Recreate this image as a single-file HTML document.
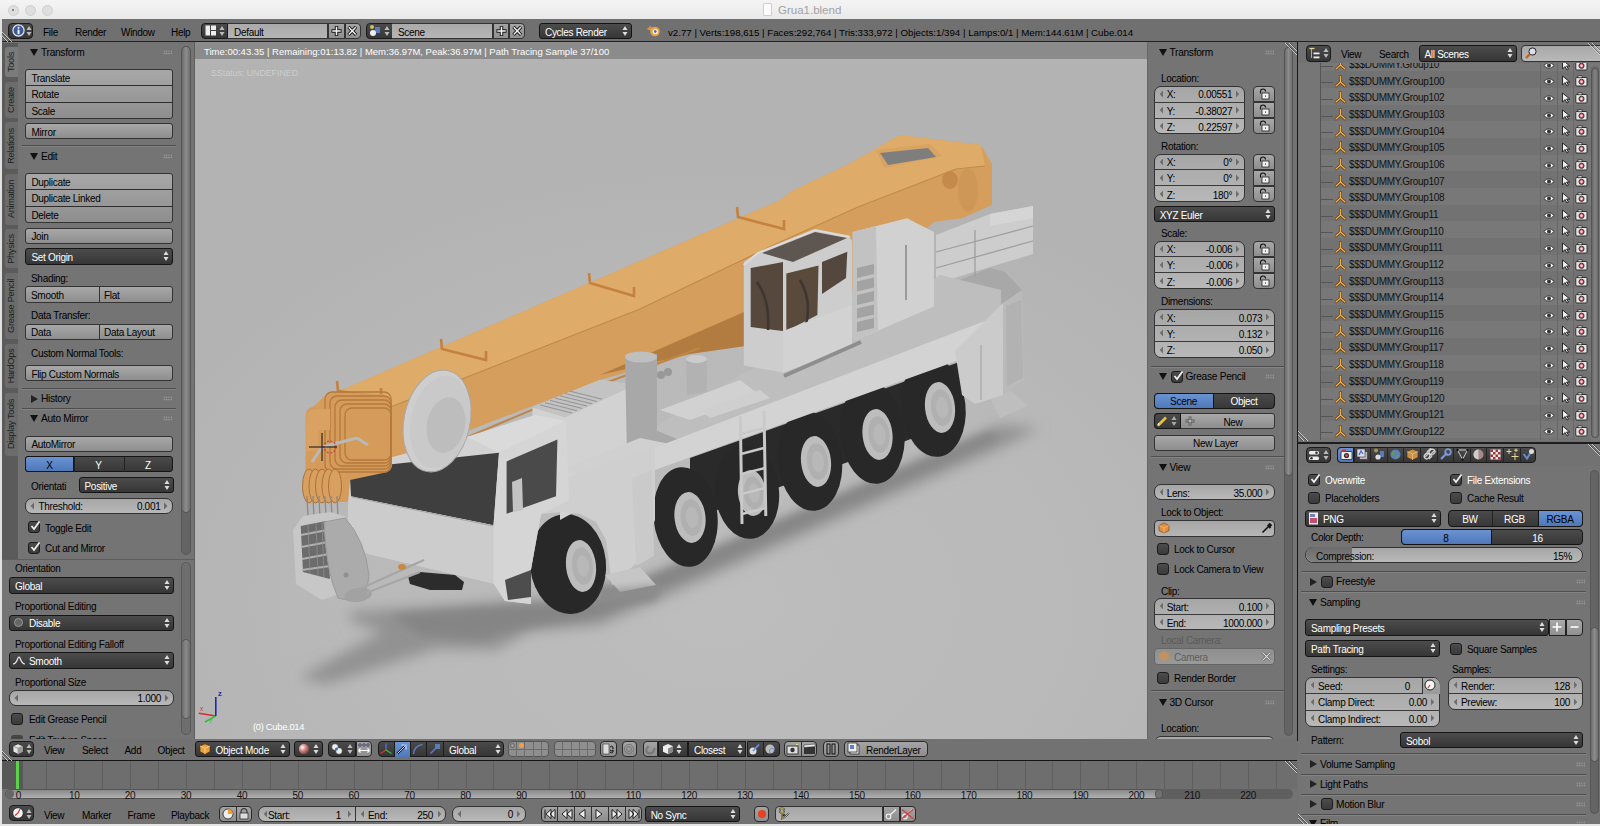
<!DOCTYPE html><html><head><meta charset="utf-8"><style>
*{margin:0;padding:0;box-sizing:border-box}
body{width:1600px;height:826px;overflow:hidden;background:#727272;position:relative;font-family:"Liberation Sans",sans-serif;font-size:10px;letter-spacing:-0.3px;color:#000}
div{position:absolute}
.t{height:12px;line-height:12px;white-space:nowrap}
.w{color:#fff}
.btn{background:linear-gradient(#a8a8a8,#8e8e8e);border:1px solid #333;border-radius:3px}
.dd{background:linear-gradient(#4c4c4c,#363636);border:1px solid #151515;border-radius:3px}
.num{background:linear-gradient(#a6a6a6,#b8b8b8);border:1px solid #333;border-radius:7px}
.chk{background:linear-gradient(#4c4c4c,#3a3a3a);border:1px solid #1c1c1c;border-radius:3px;width:12px;height:12px}
.sep{height:2px;background:linear-gradient(#4e4e4e 50%,#838383 50%)}
.hdr{font-size:10.2px}
.grip{width:9px;height:5px;background-image:radial-gradient(circle,#a0a0a0 0.6px,transparent 0.9px);background-size:2.4px 2.4px}
.tri{width:0;height:0;border-left:4px solid transparent;border-right:4px solid transparent;border-top:7px solid #111}
.trir{width:0;height:0;border-top:4px solid transparent;border-bottom:4px solid transparent;border-left:7px solid #222}
</style></head><body><div class="" style="left:0px;top:0px;width:1600px;height:19px;background:linear-gradient(#f4f4f4,#e9e9e9)"></div>
<div class="" style="left:7.5px;top:4.5px;width:11px;height:11px;border-radius:50%;background:#dedede;border:1px solid #cfcfcf"></div>
<div class="" style="left:24.5px;top:4.5px;width:11px;height:11px;border-radius:50%;background:#dedede;border:1px solid #cfcfcf"></div>
<div class="" style="left:41.5px;top:4.5px;width:11px;height:11px;border-radius:50%;background:#dedede;border:1px solid #cfcfcf"></div>
<div class="" style="left:11.8px;top:8.8px;width:2.6px;height:2.6px;border-radius:50%;background:#666"></div>
<div class="" style="left:763px;top:3px;width:9px;height:13px;background:#fbfbfb;border:1px solid #cfcfcf;border-radius:1px"></div>
<div class="t" style="left:778px;top:3.999999999999999px;color:#a2a2a2;font-size:11.5px;letter-spacing:0">Grua1.blend</div>
<div class="" style="left:0px;top:19px;width:2px;height:807px;background:#e0e0e0"></div>
<div class="" style="left:2px;top:19px;width:1598px;height:22.5px;background:#707070;border-bottom:1.5px solid #232323"></div>
<div class="" style="left:8px;top:22.5px;width:25px;height:16.5px;background:linear-gradient(#4a4a4a,#363636);border:1px solid #1a1a1a;border-radius:4px"></div>
<svg style="position:absolute;left:12px;top:24px" width="13" height="13"><circle cx="6.5" cy="6.5" r="5.6" fill="#3a5a9a" stroke="#e8e8f0" stroke-width="1.2"/><rect x="5.6" y="5.6" width="1.9" height="4.5" fill="#fff"/><circle cx="6.5" cy="3.8" r="1" fill="#fff"/></svg>
<svg style="position:absolute;left:26px;top:24.75px" width="6" height="12"><path d="M0.5 5 L3 1 L5.5 5Z M0.5 7 L3 11 L5.5 7Z" fill="#bbb"/></svg>
<div class="t" style="left:43px;top:26.8px;">File</div>
<div class="t" style="left:75px;top:26.8px;">Render</div>
<div class="t" style="left:121px;top:26.8px;">Window</div>
<div class="t" style="left:171px;top:26.8px;">Help</div>
<div class="" style="left:201px;top:22.5px;width:27px;height:16.5px;background:linear-gradient(#4a4a4a,#363636);border:1px solid #1a1a1a;border-radius:4px 0 0 4px"></div>
<svg style="position:absolute;left:205px;top:25px" width="12" height="11"><rect x="0.5" y="0.5" width="4.5" height="10" fill="#eee"/><rect x="6" y="0.5" width="5" height="4.5" fill="#eee"/><rect x="6" y="6" width="5" height="4.5" fill="#eee"/></svg>
<svg style="position:absolute;left:219px;top:24.75px" width="6" height="12"><path d="M0.5 5 L3 1 L5.5 5Z M0.5 7 L3 11 L5.5 7Z" fill="#bbb"/></svg>
<div class="" style="left:228px;top:22.5px;width:100px;height:16.5px;background:linear-gradient(#aaa,#b5b5b5);border:1px solid #333;border-left:none"></div>
<div class="t" style="left:234px;top:26.8px;">Default</div>
<div class="" style="left:327.5px;top:22.5px;width:17px;height:16.5px;background:linear-gradient(#a4a4a4,#909090);border:1px solid #333"></div>
<div class="" style="left:344.5px;top:22.5px;width:16px;height:16.5px;background:linear-gradient(#a4a4a4,#909090);border:1px solid #333;border-radius:0 4px 4px 0"></div>
<svg style="position:absolute;left:330px;top:25px" width="28" height="12"><path d="M6.5 1V11M1.5 6H11.5" stroke="#151515" stroke-width="3.4"/><path d="M6.5 1.8V10.2M2.3 6H10.7" stroke="#f4f4f4" stroke-width="1.5"/><path d="M18.5 1.8L26 9.8M26 1.8L18.5 9.8" stroke="#151515" stroke-width="3.2"/><path d="M18.8 2.2L25.7 9.4M25.7 2.2L18.8 9.4" stroke="#f4f4f4" stroke-width="1.4"/></svg>
<div class="" style="left:365.5px;top:22.5px;width:27px;height:16.5px;background:linear-gradient(#4a4a4a,#363636);border:1px solid #1a1a1a;border-radius:4px 0 0 4px"></div>
<svg style="position:absolute;left:369px;top:24px" width="13" height="13"><circle cx="3" cy="3" r="2" fill="#cfc060"/><rect x="6" y="3" width="5" height="6" fill="#5a7ac0"/><circle cx="4" cy="9" r="3" fill="#eee"/></svg>
<svg style="position:absolute;left:384px;top:24.75px" width="6" height="12"><path d="M0.5 5 L3 1 L5.5 5Z M0.5 7 L3 11 L5.5 7Z" fill="#bbb"/></svg>
<div class="" style="left:392px;top:22.5px;width:100.5px;height:16.5px;background:linear-gradient(#aaa,#b5b5b5);border:1px solid #333;border-left:none"></div>
<div class="t" style="left:398px;top:26.8px;">Scene</div>
<div class="" style="left:492.5px;top:22.5px;width:16.5px;height:16.5px;background:linear-gradient(#a4a4a4,#909090);border:1px solid #333"></div>
<div class="" style="left:509px;top:22.5px;width:16px;height:16.5px;background:linear-gradient(#a4a4a4,#909090);border:1px solid #333;border-radius:0 4px 4px 0"></div>
<svg style="position:absolute;left:495px;top:25px" width="28" height="12"><path d="M6.5 1V11M1.5 6H11.5" stroke="#151515" stroke-width="3.4"/><path d="M6.5 1.8V10.2M2.3 6H10.7" stroke="#f4f4f4" stroke-width="1.5"/><path d="M18.5 1.8L26 9.8M26 1.8L18.5 9.8" stroke="#151515" stroke-width="3.2"/><path d="M18.8 2.2L25.7 9.4M25.7 2.2L18.8 9.4" stroke="#f4f4f4" stroke-width="1.4"/></svg>
<div class="dd" style="left:539px;top:22.5px;width:93px;height:16.5px;"></div>
<div class="t w" style="left:545px;top:26.55px;">Cycles Render</div>
<svg style="position:absolute;left:622px;top:24.75px" width="6" height="12"><path d="M0.5 5 L3 1 L5.5 5Z M0.5 7 L3 11 L5.5 7Z" fill="#ddd"/></svg>
<svg style="position:absolute;left:647px;top:25px" width="14" height="12"><circle cx="8" cy="6.5" r="4.8" fill="#f0a040"/><circle cx="8.3" cy="6.5" r="2.6" fill="#fff"/><circle cx="8.3" cy="6.5" r="1.4" fill="#4a6ea8"/><path d="M0.5 3.5L5 5 M2 1.5L6 4" stroke="#f0a040" stroke-width="1.4"/></svg>
<div class="t" style="left:668px;top:26.8px;font-size:9.7px;letter-spacing:0">v2.77 | Verts:198,615 | Faces:292,764 | Tris:333,972 | Objects:1/394 | Lamps:0/1 | Mem:144.61M | Cube.014</div>
<div class="" style="left:2px;top:42.5px;width:191.5px;height:696px;background:#747474"></div>
<div class="" style="left:193.5px;top:42px;width:1.5px;height:697px;background:#5e5e5e"></div>
<div class="" style="left:2px;top:42.5px;width:15.5px;height:516px;background:#5b5b5b"></div>
<div class="" style="left:4.5px;top:46.5px;width:13px;height:30.5px;background:#7b7b7b;border-radius:3px 0 0 3px"></div>
<div class="t" style="left:-39px;top:55.75px;width:100px;text-align:center;transform:rotate(-90deg);font-size:9.2px;color:#222">Tools</div>
<div class="" style="left:4.5px;top:81.5px;width:13px;height:36.5px;background:#6c6c6c;border-radius:3px 0 0 3px"></div>
<div class="t" style="left:-39px;top:93.75px;width:100px;text-align:center;transform:rotate(-90deg);font-size:9.2px;color:#222">Create</div>
<div class="" style="left:4.5px;top:122px;width:13px;height:47px;background:#6c6c6c;border-radius:3px 0 0 3px"></div>
<div class="t" style="left:-39px;top:139.5px;width:100px;text-align:center;transform:rotate(-90deg);font-size:9.2px;color:#222">Relations</div>
<div class="" style="left:4.5px;top:173.5px;width:13px;height:51.5px;background:#6c6c6c;border-radius:3px 0 0 3px"></div>
<div class="t" style="left:-39px;top:193.25px;width:100px;text-align:center;transform:rotate(-90deg);font-size:9.2px;color:#222">Animation</div>
<div class="" style="left:4.5px;top:229px;width:13px;height:39px;background:#6c6c6c;border-radius:3px 0 0 3px"></div>
<div class="t" style="left:-39px;top:242.5px;width:100px;text-align:center;transform:rotate(-90deg);font-size:9.2px;color:#222">Physics</div>
<div class="" style="left:4.5px;top:272.5px;width:13px;height:66.5px;background:#6c6c6c;border-radius:3px 0 0 3px"></div>
<div class="t" style="left:-39px;top:299.75px;width:100px;text-align:center;transform:rotate(-90deg);font-size:9.2px;color:#222">Grease Pencil</div>
<div class="" style="left:4.5px;top:343.5px;width:13px;height:44.5px;background:#6c6c6c;border-radius:3px 0 0 3px"></div>
<div class="t" style="left:-39px;top:359.75px;width:100px;text-align:center;transform:rotate(-90deg);font-size:9.2px;color:#222">HardOps</div>
<div class="" style="left:4.5px;top:392.5px;width:13px;height:63.5px;background:#6c6c6c;border-radius:3px 0 0 3px"></div>
<div class="t" style="left:-39px;top:418.25px;width:100px;text-align:center;transform:rotate(-90deg);font-size:9.2px;color:#222">Display Tools</div>
<div class="" style="left:180.5px;top:46px;width:10px;height:509px;background:#646464;border:1px solid #575757;border-radius:5px"></div>
<div class="" style="left:180.5px;top:46px;width:10px;height:467px;background:linear-gradient(90deg,#6c6c6c,#8c8c8c 50%,#707070);border:1px solid #555;border-radius:5px"></div>
<div class="tri" style="left:30px;top:49.0px;width:0px;height:0px;"></div>
<div class="t hdr" style="left:41px;top:47.3px;">Transform</div>
<div class="grip" style="left:162.5px;top:50.0px;width:9px;height:5px;"></div>
<div class="btn" style="left:25.4px;top:68.6px;width:148px;height:50.099999999999994px;"></div>
<div class="t" style="left:31.4px;top:72.54999999999998px;">Translate</div>
<div class="" style="left:25.9px;top:84.8px;width:147px;height:1px;background:#2e2e2e"></div>
<div class="t" style="left:31.4px;top:89.24999999999999px;">Rotate</div>
<div class="" style="left:25.9px;top:101.5px;width:147px;height:1px;background:#2e2e2e"></div>
<div class="t" style="left:31.4px;top:105.94999999999999px;">Scale</div>
<div class="btn" style="left:25.4px;top:123px;width:148px;height:15.8px;"></div>
<div class="t" style="left:31.4px;top:126.50000000000001px;">Mirror</div>
<div class="sep" style="left:22px;top:145px;width:154px;height:2px;"></div>
<div class="tri" style="left:30px;top:153.0px;width:0px;height:0px;"></div>
<div class="t hdr" style="left:41px;top:151.3px;">Edit</div>
<div class="grip" style="left:162.5px;top:154.0px;width:9px;height:5px;"></div>
<div class="btn" style="left:25.4px;top:172.8px;width:148px;height:50.099999999999994px;"></div>
<div class="t" style="left:31.4px;top:176.75000000000003px;">Duplicate</div>
<div class="" style="left:25.9px;top:189.0px;width:147px;height:1px;background:#2e2e2e"></div>
<div class="t" style="left:31.4px;top:193.45000000000002px;">Duplicate Linked</div>
<div class="" style="left:25.9px;top:205.70000000000002px;width:147px;height:1px;background:#2e2e2e"></div>
<div class="t" style="left:31.4px;top:210.15000000000003px;">Delete</div>
<div class="btn" style="left:25.4px;top:227.5px;width:148px;height:16.2px;"></div>
<div class="t" style="left:31.4px;top:231.20000000000002px;">Join</div>
<div class="dd" style="left:25.4px;top:248px;width:148px;height:16.5px;"></div>
<div class="t w" style="left:31.4px;top:252.05px;">Set Origin</div>
<svg style="position:absolute;left:163.4px;top:250.25px" width="6" height="12"><path d="M0.5 5 L3 1 L5.5 5Z M0.5 7 L3 11 L5.5 7Z" fill="#ddd"/></svg>
<div class="t" style="left:31px;top:272.6px;">Shading:</div>
<div class="btn" style="left:25.4px;top:286px;width:148px;height:16.5px;"></div>
<div class="" style="left:98.5px;top:286.5px;width:1px;height:15.5px;background:#333"></div>
<div class="t" style="left:31px;top:289.8px;">Smooth</div>
<div class="t" style="left:104px;top:289.8px;">Flat</div>
<div class="t" style="left:31px;top:310.3px;">Data Transfer:</div>
<div class="btn" style="left:25.4px;top:323.5px;width:148px;height:16.5px;"></div>
<div class="" style="left:98.5px;top:324px;width:1px;height:15.5px;background:#333"></div>
<div class="t" style="left:31px;top:327.3px;">Data</div>
<div class="t" style="left:104px;top:327.3px;">Data Layout</div>
<div class="t" style="left:31px;top:347.8px;">Custom Normal Tools:</div>
<div class="btn" style="left:25.4px;top:365px;width:148px;height:16.2px;"></div>
<div class="t" style="left:31.4px;top:368.70000000000005px;">Flip Custom Normals</div>
<div class="sep" style="left:22px;top:387.5px;width:154px;height:2px;"></div>
<div class="trir" style="left:31px;top:394.5px;width:0px;height:0px;"></div>
<div class="t hdr" style="left:41px;top:393.3px;">History</div>
<div class="grip" style="left:162.5px;top:396.0px;width:9px;height:5px;"></div>
<div class="sep" style="left:22px;top:407.5px;width:154px;height:2px;"></div>
<div class="tri" style="left:30px;top:415.0px;width:0px;height:0px;"></div>
<div class="t hdr" style="left:41px;top:413.3px;">Auto Mirror</div>
<div class="grip" style="left:162.5px;top:416.0px;width:9px;height:5px;"></div>
<div class="btn" style="left:25.4px;top:435.5px;width:148px;height:16.2px;"></div>
<div class="t" style="left:31.4px;top:439.20000000000005px;">AutoMirror</div>
<div class="" style="left:25.4px;top:456px;width:148px;height:16.2px;background:linear-gradient(#4a4a4a,#383838);border:1px solid #151515;border-radius:3px"></div>
<div class="" style="left:25.4px;top:456px;width:48.5px;height:16.2px;background:linear-gradient(#6b93d3,#4f78b9);border:1px solid #151515;border-radius:3px 0 0 3px"></div>
<div class="" style="left:123.5px;top:456.5px;width:1px;height:15.2px;background:#222"></div>
<div class="" style="left:73.9px;top:456.5px;width:1px;height:15.2px;background:#222"></div>
<div class="t" style="left:-50.5px;width:200px;text-align:center;top:459.8px;">X</div>
<div class="t w" style="left:-1.5px;width:200px;text-align:center;top:459.8px;">Y</div>
<div class="t w" style="left:48px;width:200px;text-align:center;top:459.8px;">Z</div>
<div class="t" style="left:31px;top:480.8px;">Orientati</div>
<div class="dd" style="left:78.5px;top:477px;width:95px;height:16.2px;"></div>
<div class="t w" style="left:84.5px;top:480.90000000000003px;">Positive</div>
<svg style="position:absolute;left:163.5px;top:479.1px" width="6" height="12"><path d="M0.5 5 L3 1 L5.5 5Z M0.5 7 L3 11 L5.5 7Z" fill="#ddd"/></svg>
<div class="num" style="left:25.4px;top:498px;width:148px;height:16.2px;border-radius:7px;"></div>
<svg style="position:absolute;left:30.4px;top:502.1px" width="5" height="8"><path d="M4 0.5 L0.5 4 L4 7.5Z" fill="#6a6a6a"/></svg>
<svg style="position:absolute;left:163.4px;top:502.1px" width="5" height="8"><path d="M1 0.5 L4.5 4 L1 7.5Z" fill="#6a6a6a"/></svg>
<div class="t" style="left:38.4px;top:500.90000000000003px;">Threshold:</div>
<div class="t" style="right:1439.6px;top:500.90000000000003px;">0.001</div>
<div class="chk" style="left:28px;top:521px;width:12px;height:12px;"><svg width="12" height="12" style="position:absolute;left:0;top:-2px"><path d="M2.5 6 L5 9 L10.5 1.5" stroke="#eee" stroke-width="1.8" fill="none"/></svg></div>
<div class="t" style="left:45px;top:522.8px;">Toggle Edit</div>
<div class="chk" style="left:28px;top:541.5px;width:12px;height:12px;"><svg width="12" height="12" style="position:absolute;left:0;top:-2px"><path d="M2.5 6 L5 9 L10.5 1.5" stroke="#eee" stroke-width="1.8" fill="none"/></svg></div>
<div class="t" style="left:45px;top:542.8px;">Cut and Mirror</div>
<div class="" style="left:2px;top:558.5px;width:191.5px;height:1px;background:#5e5e5e"></div>
<div class="" style="left:180.5px;top:562px;width:10px;height:173px;background:#6e6e6e;border:1px solid #5a5a5a;border-radius:5px"></div>
<div class="" style="left:180.5px;top:639px;width:10px;height:80px;background:linear-gradient(90deg,#6a6a6a,#8a8a8a 50%,#6e6e6e);border:1px solid #555;border-radius:5px"></div>
<div class="t" style="left:15px;top:563.3px;">Orientation</div>
<div class="dd" style="left:9px;top:577px;width:165px;height:16.5px;"></div>
<div class="t w" style="left:15px;top:581.05px;">Global</div>
<svg style="position:absolute;left:164px;top:579.25px" width="6" height="12"><path d="M0.5 5 L3 1 L5.5 5Z M0.5 7 L3 11 L5.5 7Z" fill="#ddd"/></svg>
<div class="t" style="left:15px;top:601.3px;">Proportional Editing</div>
<div class="dd" style="left:9px;top:614.5px;width:165px;height:16.5px;"></div>
<div class="t w" style="left:15px;top:618.55px;"></div>
<svg style="position:absolute;left:164px;top:616.75px" width="6" height="12"><path d="M0.5 5 L3 1 L5.5 5Z M0.5 7 L3 11 L5.5 7Z" fill="#ddd"/></svg>
<svg style="position:absolute;left:13px;top:617px" width="11" height="11"><circle cx="5.5" cy="5.5" r="4" fill="#666" stroke="#999" stroke-width="1"/></svg>
<div class="t w" style="left:29px;top:618.3px;">Disable</div>
<div class="t" style="left:15px;top:638.8px;">Proportional Editing Falloff</div>
<div class="dd" style="left:9px;top:652px;width:165px;height:16.5px;"></div>
<div class="t w" style="left:15px;top:656.05px;"></div>
<svg style="position:absolute;left:164px;top:654.25px" width="6" height="12"><path d="M0.5 5 L3 1 L5.5 5Z M0.5 7 L3 11 L5.5 7Z" fill="#ddd"/></svg>
<svg style="position:absolute;left:12px;top:655px" width="14" height="10"><path d="M1 9 Q4 9 6 3 Q7 1 8 3 Q10 9 13 9" stroke="#eee" stroke-width="1.2" fill="none"/></svg>
<div class="t w" style="left:29px;top:655.8px;">Smooth</div>
<div class="t" style="left:15px;top:676.8px;">Proportional Size</div>
<div class="num" style="left:9px;top:689.5px;width:165px;height:16.5px;border-radius:7px;"></div>
<svg style="position:absolute;left:14px;top:693.75px" width="5" height="8"><path d="M4 0.5 L0.5 4 L4 7.5Z" fill="#6a6a6a"/></svg>
<svg style="position:absolute;left:164px;top:693.75px" width="5" height="8"><path d="M1 0.5 L4.5 4 L1 7.5Z" fill="#6a6a6a"/></svg>
<div class="t" style="right:1439px;top:692.55px;">1.000</div>
<div class="chk" style="left:11px;top:713px;width:12px;height:12px;"></div>
<div class="t" style="left:29px;top:714.3px;">Edit Grease Pencil</div>
<div class="" style="left:11px;top:735px;width:12px;height:4px;background:#444;border-radius:3px 3px 0 0"></div>
<div class="t" style="left:29px;top:734.8px;clip-path:inset(0 0 7px 0)">Edit Texture Space</div>
<div class="" style="left:195px;top:42px;width:952px;height:696.5px;background:#b6b6b6"></div>
<div class="" style="left:195px;top:42px;width:952px;height:16.8px;background:#8b8b8b"></div>
<div class="t" style="left:204px;top:45.8px;color:#fff;font-size:9.5px;letter-spacing:0">Time:00:43.35 | Remaining:01:13.82 | Mem:36.97M, Peak:36.97M | Path Tracing Sample 37/100</div>
<svg style="position:absolute;left:0;top:0" width="1600" height="826" viewBox="0 0 1600 826"><clipPath id="vc"><rect x="195" y="59" width="952" height="680"/></clipPath><g clip-path="url(#vc)"><defs><filter id="bl" x="-50%" y="-50%" width="200%" height="200%"><feGaussianBlur stdDeviation="14"/></filter><filter id="bl3" x="-50%" y="-50%" width="200%" height="200%"><feGaussianBlur stdDeviation="7"/></filter><filter id="bl2" x="-50%" y="-50%" width="200%" height="200%"><feGaussianBlur stdDeviation="5"/></filter><radialGradient id="floor" cx="0.55" cy="0.8" r="0.65"><stop offset="0" stop-color="#bdbdbd"/><stop offset="0.6" stop-color="#b9b9b9"/><stop offset="1" stop-color="#b3b3b3"/></radialGradient></defs><rect x="195" y="59" width="952" height="680" fill="url(#floor)"/><polygon points="349,612 530,600 600,598 1000,425 1040,428 1000,448 600,625 530,631 496,650 436,649 327,684 299,678 383,631 352,622" fill="#929292" filter="url(#bl3)"/><polygon points="390,615 520,605 590,602 990,432 1000,438 600,615 520,628 480,640 420,635" fill="#858585" filter="url(#bl2)"/><polygon points="592,584 655,584 655,600 600,604" fill="#8a8a8a" filter="url(#bl2)"/><polygon points="690,458 965,360 955,420 930,432 690,520" fill="#2a2a2a" /><polygon points="934,290 990,268 1005,272 1022,290 1022,305 960,325 934,330" fill="#a8a8a8" /><polygon points="990,397 1010,390 1028,406 1000,418" fill="#bebebe" /><polygon points="936,235 990,214 1033,206 1033,254 980,270 936,284" fill="#cdcdcd" /><polygon points="990,214 1033,206 1033,218 990,226" fill="#d5d5d5" /><path d="M936 252 L1033 226 M936 268 L1033 241 M975 230 L975 276" stroke="#9c9c9c" stroke-width="1.2" fill="none"/><polygon points="545,480 640,436 745,372 852,336 940,275 1001,290 1001,315 560,486" fill="#bebebe" /><polygon points="660,410 740,380 760,395 690,420" fill="#d1d1d1" /><polygon points="600,448 650,428 680,440 620,465" fill="#a8a8a8" /><polygon points="306,413 328,393 337,392 781,200 790,192 849,164 900,135 981,145 992,164 992,205 963,218 934,222 852,290 744,344 690,354 600,380 470,430 383,470 340,485 306,500" fill="#d69e5c" /><polygon points="337,392 781,200 790,192 849,164 900,135 981,145 985,166 956,169 858,207 778,243 640,309 383,410 345,412" fill="#dfab68" /><polygon points="600,375 744,312 746,346 690,354" fill="#b27c40" /><polygon points="876,150 930,144 942,156 884,168" fill="#d7a464" /><polygon points="880,153 928,148 936,157 888,165" fill="#7e7e7e" /><path d="M383 410 L640 309 L778 243 L858 207 L956 169 L985 166" stroke="#c08a4a" stroke-width="1.2" fill="none"/><path d="M390 470 L560 398 L600 385 L700 348" stroke="#c08646" stroke-width="2" fill="none"/><ellipse cx="968" cy="190" rx="10" ry="22" fill="#cf9757" transform="rotate(0 968 190)" /><ellipse cx="950" cy="180" rx="8" ry="9" fill="#c48a4c" transform="rotate(0 950 180)" /><path d="M337 381 L338 391 L381 397 L381 388" stroke="#c4813f" stroke-width="2.6" fill="none"/><path d="M441 339 L442 349 L486 360 L486 351" stroke="#c4813f" stroke-width="2.6" fill="none"/><path d="M589 273 L590 283 L634 296 L634 287" stroke="#c4813f" stroke-width="2.6" fill="none"/><path d="M737 207 L738 217 L784 229 L784 220" stroke="#c4813f" stroke-width="2.6" fill="none"/><polygon points="852.7,231.9 907,218.3 934,231.9 934,306.4 856,340 852.7,337" fill="#d1d1d1" /><polygon points="852.7,231.9 876,226 878,330 856,340 852.7,337" fill="#c2c2c2" /><polygon points="857,268.0 874,264.0 874,274.0 857,278.0" fill="#a3a3a3" /><polygon points="857,281.5 874,277.5 874,287.5 857,291.5" fill="#a3a3a3" /><polygon points="857,295.0 874,291.0 874,301.0 857,305.0" fill="#a3a3a3" /><polygon points="857,308.5 874,304.5 874,314.5 857,318.5" fill="#a3a3a3" /><polygon points="857,322.0 874,318.0 874,328.0 857,332.0" fill="#a3a3a3" /><path d="M906 245 L906 300" stroke="#9a9a9a" stroke-width="2" fill="none"/><polygon points="743.8,365.6 743.8,262 757.6,253 815,230 849.6,236.8 852,241 852,347 783,372.5" fill="#cdcdcd" /><polygon points="762,253 815,232 847,238 793,262" fill="#5e5650" /><polygon points="750.7,268 783,262 783,331 750.7,327" fill="#56483c" /><polygon points="786.3,273.6 818.5,265.5 817.4,315 786.3,331" fill="#5a4a3c" /><polygon points="822,262 847.3,251.7 846,278 822,294" fill="#54483e" /><path d="M757 282 Q770 300 768 330 M800 280 Q812 300 806 325" stroke="#3c3632" stroke-width="2.5" fill="none"/><polygon points="783,331 852,305 852,347 783,372.5" fill="#d2d2d2" /><path d="M743.8 265 L757.6 253 L815 230 L849.6 236.8" stroke="#dbdbdb" stroke-width="2" fill="none"/><path d="M784 376 L861 342" stroke="#8e8e8e" stroke-width="4" fill="none"/><polygon points="532.5,407.5 600,380 635,385 635,470 567,487 532,475" fill="#d2d2d2" /><polygon points="532.5,407.5 600,380 635,385 565,417.5" fill="#c3c3c3" /><path d="M540 405.0 L572 413.0" stroke="#8d8d8d" stroke-width="0.9" fill="none"/><path d="M545 402.7 L577 410.7" stroke="#8d8d8d" stroke-width="0.9" fill="none"/><path d="M550 400.4 L582 408.4" stroke="#8d8d8d" stroke-width="0.9" fill="none"/><path d="M555 398.1 L587 406.1" stroke="#8d8d8d" stroke-width="0.9" fill="none"/><path d="M560 395.8 L592 403.8" stroke="#8d8d8d" stroke-width="0.9" fill="none"/><path d="M565 393.5 L597 401.5" stroke="#8d8d8d" stroke-width="0.9" fill="none"/><path d="M570 391.2 L602 399.2" stroke="#8d8d8d" stroke-width="0.9" fill="none"/><polygon points="625,358 657,354 657,450 627,455" fill="#a8a8a8" /><ellipse cx="641" cy="357" rx="16" ry="5.5" fill="#bfbfbf" transform="rotate(0 641 357)" /><ellipse cx="661" cy="375" rx="4" ry="4" fill="#989898" transform="rotate(0 661 375)" /><ellipse cx="668" cy="372" rx="4" ry="4" fill="#989898" transform="rotate(0 668 372)" /><polygon points="686,360 707,357 707,392 687,395" fill="#b2b2b2" /><ellipse cx="696.5" cy="359" rx="10.5" ry="4" fill="#cbcbcb" transform="rotate(0 696.5 359)" /><polygon points="560,470 640,438 700,450 620,482" fill="#d0d0d0" /><polygon points="700,410 760,390 770,398 710,418" fill="#cfcfcf" /><ellipse cx="933.5" cy="407" rx="32" ry="50" fill="#282828" transform="rotate(-6 933.5 407)" /><ellipse cx="940" cy="407.5" rx="15" ry="25.5" fill="#bdbdbd" transform="rotate(-6 940 407.5)" /><ellipse cx="941.5" cy="407.5" rx="10.5" ry="18.36" fill="#b0b0b0" transform="rotate(-6 941.5 407.5)" /><ellipse cx="942" cy="407.5" rx="6.0" ry="10.709999999999999" fill="#b8b8b8" transform="rotate(-6 942 407.5)" /><ellipse cx="872.5" cy="433" rx="32" ry="51" fill="#282828" transform="rotate(-6 872.5 433)" /><ellipse cx="877.5" cy="434.5" rx="15" ry="25.5" fill="#bdbdbd" transform="rotate(-6 877.5 434.5)" /><ellipse cx="879.0" cy="434.5" rx="10.5" ry="18.36" fill="#b0b0b0" transform="rotate(-6 879.0 434.5)" /><ellipse cx="879.5" cy="434.5" rx="6.0" ry="10.709999999999999" fill="#b8b8b8" transform="rotate(-6 879.5 434.5)" /><ellipse cx="810" cy="461" rx="32" ry="50" fill="#282828" transform="rotate(-6 810 461)" /><ellipse cx="816" cy="461.5" rx="15" ry="25.5" fill="#bdbdbd" transform="rotate(-6 816 461.5)" /><ellipse cx="817.5" cy="461.5" rx="10.5" ry="18.36" fill="#b0b0b0" transform="rotate(-6 817.5 461.5)" /><ellipse cx="818" cy="461.5" rx="6.0" ry="10.709999999999999" fill="#b8b8b8" transform="rotate(-6 818 461.5)" /><ellipse cx="747" cy="492" rx="32" ry="47" fill="#282828" transform="rotate(-6 747 492)" /><ellipse cx="752" cy="493" rx="14" ry="23" fill="#bdbdbd" transform="rotate(-6 752 493)" /><ellipse cx="753.5" cy="493" rx="9.799999999999999" ry="16.56" fill="#b0b0b0" transform="rotate(-6 753.5 493)" /><ellipse cx="754" cy="493" rx="5.6000000000000005" ry="9.66" fill="#b8b8b8" transform="rotate(-6 754 493)" /><ellipse cx="685.5" cy="517" rx="32" ry="50" fill="#282828" transform="rotate(-6 685.5 517)" /><ellipse cx="690" cy="517.5" rx="15.5" ry="25.5" fill="#bdbdbd" transform="rotate(-6 690 517.5)" /><ellipse cx="691.5" cy="517.5" rx="10.85" ry="18.36" fill="#b0b0b0" transform="rotate(-6 691.5 517.5)" /><ellipse cx="692" cy="517.5" rx="6.2" ry="10.709999999999999" fill="#b8b8b8" transform="rotate(-6 692 517.5)" /><ellipse cx="568" cy="564" rx="38" ry="50" fill="#282828" transform="rotate(-6 568 564)" /><ellipse cx="581" cy="566" rx="15" ry="26" fill="#bdbdbd" transform="rotate(-6 581 566)" /><ellipse cx="582.5" cy="566" rx="10.5" ry="18.72" fill="#b0b0b0" transform="rotate(-6 582.5 566)" /><ellipse cx="583" cy="566" rx="6.0" ry="10.92" fill="#b8b8b8" transform="rotate(-6 583 566)" /><polygon points="560,484 1003,314 1003,336 965,358 655,470 600,498 560,520" fill="#d3d3d3" /><polygon points="955,351 1003,303 1003,395 975,404 962,395" fill="#cbcbcb" /><polygon points="1003,303 1022,290 1024,380 1003,395" fill="#bababa" /><polygon points="1006,306 1021,300 1023,378 1007,386" fill="#b2b2b2" /><path d="M981 345 L981 400" stroke="#a0a0a0" stroke-width="1" fill="none"/><polygon points="541,514 566,478 655,446 655,520 640,560 612,585 606,540 596,522 580,514 562,512" fill="#cfcfcf" /><polygon points="632,478 652,470 654,556 636,566" fill="#cacaca" /><polygon points="605,575 640,567 656,585 620,592" fill="#c6c6c6" /><polygon points="604,592 656,586 660,596 612,600" fill="#8c8c8c" filter="url(#bl2)"/><path d="M740.3 416 L742 524 M764 411 L765.8 516" stroke="#c9c9c9" stroke-width="3" fill="none"/><path d="M741 434 L764 428 M741 454 L764 448 M741.5 474 L765 468 M741.5 494 L765 488 M742 514 L765.5 508" stroke="#c9c9c9" stroke-width="2.5" fill="none"/><polygon points="408,576 420,572 455,575 464,582 462,590 430,590 410,584" fill="#2c2c2c" /><polygon points="349.6,468.7 467,436.7 566,420.7 569,500 541,514 530,575 531,604 505,601 493.5,583.5 368.5,554 348,545" fill="#d2d2d2" /><polygon points="467,436.7 535,415 566,420.7 499,452.7" fill="#dadada" /><polygon points="349.6,468.7 499,452.7 493.5,525.3 351,496.3" fill="#3f3f3f" /><polygon points="499,452.7 566,420.7 569,500 541,514 530,575 531,604 505,601 493.5,583.5 493.5,525" fill="#d5d5d5" /><polygon points="348,496 493.5,525.3 493.5,583.5 368.5,554 348,545" fill="#cccccc" /><polygon points="506.6,461.4 557.4,439.6 556,496.3 506.6,513.7" fill="#4a4a4a" /><polygon points="505,580 531,570 531,597 508,600" fill="#4d4d4d" /><polygon points="512,482 522,478 523,510 513,512" fill="#c3c3c3" /><path d="M352 497 L493 526" stroke="#a5a5a5" stroke-width="1" fill="none"/><ellipse cx="378" cy="453" rx="3" ry="6" fill="#b0b0b0" transform="rotate(0 378 453)" /><ellipse cx="437" cy="421" rx="33" ry="51.5" fill="#cecece" transform="rotate(12 437 421)" stroke="#a9a9a9" stroke-width="1"/><ellipse cx="440" cy="422" rx="29" ry="47" fill="#c9c9c9" transform="rotate(12 440 422)" /><ellipse cx="446" cy="425" rx="19" ry="28" fill="#bdbdbd" transform="rotate(12 446 425)" /><path d="M305.5 502 L305.5 416 Q306 407 314 407 L326 407 L326 400 Q327 392 336 392 L382 394 Q391 396 391 404 L392 466 Q391 472 383 473 L350 480 L348 502 Z" fill="#d49b5b"/><rect x="325" y="392" width="66" height="80" rx="7" fill="none" stroke="#b57a3c" stroke-width="1.3"/><rect x="330" y="396" width="61" height="73" rx="7" fill="none" stroke="#b57a3c" stroke-width="1.3"/><rect x="335" y="400" width="56" height="66" rx="7" fill="none" stroke="#b57a3c" stroke-width="1.3"/><rect x="340" y="404" width="51" height="59" rx="7" fill="none" stroke="#b57a3c" stroke-width="1.3"/><rect x="345" y="408" width="46" height="52" rx="7" fill="none" stroke="#b57a3c" stroke-width="1.3"/><path d="M306 420 Q306 409 318 409 L330 409 L330 430 L318 430 L318 450 L306 452Z" fill="#d9a262"/><ellipse cx="309.0" cy="486" rx="6.5" ry="17" fill="#d8a060" transform="rotate(0 309.0 486)" stroke="#a86a30" stroke-width="0.9"/><ellipse cx="315.5" cy="486" rx="6.5" ry="17" fill="#d8a060" transform="rotate(0 315.5 486)" stroke="#a86a30" stroke-width="0.9"/><ellipse cx="322.0" cy="486" rx="6.5" ry="17" fill="#d8a060" transform="rotate(0 322.0 486)" stroke="#a86a30" stroke-width="0.9"/><ellipse cx="328.5" cy="486" rx="6.5" ry="17" fill="#d8a060" transform="rotate(0 328.5 486)" stroke="#a86a30" stroke-width="0.9"/><ellipse cx="335.0" cy="486" rx="6.5" ry="17" fill="#d8a060" transform="rotate(0 335.0 486)" stroke="#a86a30" stroke-width="0.9"/><path d="M322 447 L357 438 M357 438 L368 445 M322 447 L312 462" stroke="#b9b9b9" stroke-width="3" fill="none"/><ellipse cx="330" cy="447" rx="6" ry="6" fill="none" transform="rotate(0 330 447)" stroke="#cc4444" stroke-width="1.2" stroke-dasharray="2 1.5"/><path d="M322 433 L322 461 M309 447 L337 447" stroke="#111111" stroke-width="1" fill="none"/><path d="M307 496 L308 516 M313 496 L314 518 M319 496 L320 518 M325 496 L326 518 M331 496 L332 518 M337 496 L338 518" stroke="#8a8a8a" stroke-width="1.3" fill="none"/><polygon points="293,530 303,516 330,512 345,516 345,592 322,600 296,584" fill="#c7c7c7" /><polygon points="300.7,526 326,521 330,579 303,572" fill="#6c6c6c" /><path d="M301 535 L327 530 M301 547 L328 542 M302 559 L329 554 M302 570 L330 566" stroke="#b0b0b0" stroke-width="2" fill="none"/><path d="M308 524 L310 574 M316 523 L318 576 M322 522 L324 577" stroke="#8e8e8e" stroke-width="0.8" fill="none"/><path d="M324 522 L345 518 Q365 540 369 575 Q368 598 352 601 L338 598 Q326 572 324 522Z" fill="#ababab" stroke="#9a9a9a" stroke-width="1"/><ellipse cx="346" cy="575" rx="2.5" ry="2.5" fill="#8f8f8f" transform="rotate(0 346 575)" /><ellipse cx="358" cy="595" rx="14" ry="7" fill="#a2a2a2" transform="rotate(-8 358 595)" /><path d="M362 588 L424 560 M366 593 L420 572" stroke="#a6a6a6" stroke-width="2.2" fill="none"/><ellipse cx="402" cy="567" rx="4" ry="3" fill="#c88a40" transform="rotate(0 402 567)" /><path d="M350 503 L355 510" stroke="#222" stroke-width="0" fill="none"/></g></svg>
<div class="t" style="left:211px;top:67.3px;color:#cdcdcd;font-size:8.8px;letter-spacing:0">SStatus: UNDEFINED</div>
<div class="t" style="left:253px;top:721.3px;color:#fff;font-size:9.4px">(0) Cube.014</div>
<svg style="position:absolute;left:195px;top:686px" width="34" height="40"><path d="M20.8 29.9 L3.7 27.2" stroke="#d43030" stroke-width="1.5"/><path d="M20.8 29.9 L10 36" stroke="#30c030" stroke-width="1.5"/><path d="M20.8 29.9 L20.8 11" stroke="#1a2ab0" stroke-width="1.6"/><text x="23" y="10" font-size="7.5" fill="#1a2ab0" font-family="Liberation Sans" font-weight="bold">z</text><text x="5" y="25" font-size="6.5" fill="#d43030" font-family="Liberation Sans">x</text><text x="14" y="36" font-size="6" fill="#30c030" font-family="Liberation Sans">y</text></svg>
<div class="" style="left:1147px;top:42.5px;width:150px;height:696px;background:#747474;border-left:1px solid #666"></div>
<div class="" style="left:1283.8px;top:46.5px;width:9.5px;height:689px;background:#646464;border:1px solid #575757;border-radius:5px"></div>
<div class="" style="left:1283.8px;top:46.5px;width:9.5px;height:429px;background:linear-gradient(90deg,#6c6c6c,#8c8c8c 50%,#707070);border:1px solid #555;border-radius:5px"></div>
<div class="tri" style="left:1158.5px;top:49.0px;width:0px;height:0px;"></div>
<div class="t hdr" style="left:1169.5px;top:47.3px;">Transform</div>
<div class="grip" style="left:1265px;top:50.0px;width:9px;height:5px;"></div>
<div class="t" style="left:1161px;top:73.3px;">Location:</div>
<div class="num" style="left:1153.7px;top:85.8px;width:91.6px;height:48.599999999999994px;border-radius:7px"></div>
<svg style="position:absolute;left:1158.7px;top:89.89999999999999px" width="5" height="8"><path d="M4 0.5 L0.8 4 L4 7.5Z" fill="#6d6d6d"/></svg>
<svg style="position:absolute;left:1235.3px;top:89.89999999999999px" width="5" height="8"><path d="M1 0.5 L4.2 4 L1 7.5Z" fill="#6d6d6d"/></svg>
<div class="t" style="left:1166.7px;top:89.39999999999999px;">X:</div>
<div class="t" style="right:367.70000000000005px;top:89.39999999999999px;">0.00551</div>
<div class="" style="left:1154.2px;top:101.5px;width:90.6px;height:1px;background:#3a3a3a"></div>
<svg style="position:absolute;left:1158.7px;top:106.1px" width="5" height="8"><path d="M4 0.5 L0.8 4 L4 7.5Z" fill="#6d6d6d"/></svg>
<svg style="position:absolute;left:1235.3px;top:106.1px" width="5" height="8"><path d="M1 0.5 L4.2 4 L1 7.5Z" fill="#6d6d6d"/></svg>
<div class="t" style="left:1166.7px;top:105.6px;">Y:</div>
<div class="t" style="right:367.70000000000005px;top:105.6px;">-0.38027</div>
<div class="" style="left:1154.2px;top:117.69999999999999px;width:90.6px;height:1px;background:#3a3a3a"></div>
<svg style="position:absolute;left:1158.7px;top:122.29999999999998px" width="5" height="8"><path d="M4 0.5 L0.8 4 L4 7.5Z" fill="#6d6d6d"/></svg>
<svg style="position:absolute;left:1235.3px;top:122.29999999999998px" width="5" height="8"><path d="M1 0.5 L4.2 4 L1 7.5Z" fill="#6d6d6d"/></svg>
<div class="t" style="left:1166.7px;top:121.79999999999998px;">Z:</div>
<div class="t" style="right:367.70000000000005px;top:121.79999999999998px;">0.22597</div>
<div class="btn" style="left:1253.3px;top:85.8px;width:22px;height:16.2px;border-radius:4px 4px 0 0"></div>
<svg style="position:absolute;left:1258px;top:88.0px" width="12" height="12"><path d="M2.5 5.5 V3.5 A2.5 2.5 0 0 1 7.5 3.5" stroke="#111" stroke-width="1.1" fill="none"/><rect x="4" y="5" width="7" height="6" fill="#f2f2f2" stroke="#222" stroke-width="0.8"/><rect x="7" y="7.5" width="1" height="1.2" fill="#333"/></svg>
<div class="btn" style="left:1253.3px;top:102.0px;width:22px;height:16.2px;border-radius:0"></div>
<svg style="position:absolute;left:1258px;top:104.2px" width="12" height="12"><path d="M2.5 5.5 V3.5 A2.5 2.5 0 0 1 7.5 3.5" stroke="#111" stroke-width="1.1" fill="none"/><rect x="4" y="5" width="7" height="6" fill="#f2f2f2" stroke="#222" stroke-width="0.8"/><rect x="7" y="7.5" width="1" height="1.2" fill="#333"/></svg>
<div class="btn" style="left:1253.3px;top:118.19999999999999px;width:22px;height:16.2px;border-radius:0 0 4px 4px"></div>
<svg style="position:absolute;left:1258px;top:120.4px" width="12" height="12"><path d="M2.5 5.5 V3.5 A2.5 2.5 0 0 1 7.5 3.5" stroke="#111" stroke-width="1.1" fill="none"/><rect x="4" y="5" width="7" height="6" fill="#f2f2f2" stroke="#222" stroke-width="0.8"/><rect x="7" y="7.5" width="1" height="1.2" fill="#333"/></svg>
<div class="t" style="left:1161px;top:141.3px;">Rotation:</div>
<div class="num" style="left:1153.7px;top:153.5px;width:91.6px;height:48.599999999999994px;border-radius:7px"></div>
<svg style="position:absolute;left:1158.7px;top:157.6px" width="5" height="8"><path d="M4 0.5 L0.8 4 L4 7.5Z" fill="#6d6d6d"/></svg>
<svg style="position:absolute;left:1235.3px;top:157.6px" width="5" height="8"><path d="M1 0.5 L4.2 4 L1 7.5Z" fill="#6d6d6d"/></svg>
<div class="t" style="left:1166.7px;top:157.1px;">X:</div>
<div class="t" style="right:367.70000000000005px;top:157.1px;">0°</div>
<div class="" style="left:1154.2px;top:169.2px;width:90.6px;height:1px;background:#3a3a3a"></div>
<svg style="position:absolute;left:1158.7px;top:173.79999999999998px" width="5" height="8"><path d="M4 0.5 L0.8 4 L4 7.5Z" fill="#6d6d6d"/></svg>
<svg style="position:absolute;left:1235.3px;top:173.79999999999998px" width="5" height="8"><path d="M1 0.5 L4.2 4 L1 7.5Z" fill="#6d6d6d"/></svg>
<div class="t" style="left:1166.7px;top:173.29999999999998px;">Y:</div>
<div class="t" style="right:367.70000000000005px;top:173.29999999999998px;">0°</div>
<div class="" style="left:1154.2px;top:185.4px;width:90.6px;height:1px;background:#3a3a3a"></div>
<svg style="position:absolute;left:1158.7px;top:190.0px" width="5" height="8"><path d="M4 0.5 L0.8 4 L4 7.5Z" fill="#6d6d6d"/></svg>
<svg style="position:absolute;left:1235.3px;top:190.0px" width="5" height="8"><path d="M1 0.5 L4.2 4 L1 7.5Z" fill="#6d6d6d"/></svg>
<div class="t" style="left:1166.7px;top:189.5px;">Z:</div>
<div class="t" style="right:367.70000000000005px;top:189.5px;">180°</div>
<div class="btn" style="left:1253.3px;top:153.5px;width:22px;height:16.2px;border-radius:4px 4px 0 0"></div>
<svg style="position:absolute;left:1258px;top:155.7px" width="12" height="12"><path d="M2.5 5.5 V3.5 A2.5 2.5 0 0 1 7.5 3.5" stroke="#111" stroke-width="1.1" fill="none"/><rect x="4" y="5" width="7" height="6" fill="#f2f2f2" stroke="#222" stroke-width="0.8"/><rect x="7" y="7.5" width="1" height="1.2" fill="#333"/></svg>
<div class="btn" style="left:1253.3px;top:169.7px;width:22px;height:16.2px;border-radius:0"></div>
<svg style="position:absolute;left:1258px;top:171.89999999999998px" width="12" height="12"><path d="M2.5 5.5 V3.5 A2.5 2.5 0 0 1 7.5 3.5" stroke="#111" stroke-width="1.1" fill="none"/><rect x="4" y="5" width="7" height="6" fill="#f2f2f2" stroke="#222" stroke-width="0.8"/><rect x="7" y="7.5" width="1" height="1.2" fill="#333"/></svg>
<div class="btn" style="left:1253.3px;top:185.9px;width:22px;height:16.2px;border-radius:0 0 4px 4px"></div>
<svg style="position:absolute;left:1258px;top:188.1px" width="12" height="12"><path d="M2.5 5.5 V3.5 A2.5 2.5 0 0 1 7.5 3.5" stroke="#111" stroke-width="1.1" fill="none"/><rect x="4" y="5" width="7" height="6" fill="#f2f2f2" stroke="#222" stroke-width="0.8"/><rect x="7" y="7.5" width="1" height="1.2" fill="#333"/></svg>
<div class="dd" style="left:1153.7px;top:205.5px;width:121.6px;height:16.5px;"></div>
<div class="t w" style="left:1159.7px;top:209.55px;">XYZ Euler</div>
<svg style="position:absolute;left:1265.3px;top:207.75px" width="6" height="12"><path d="M0.5 5 L3 1 L5.5 5Z M0.5 7 L3 11 L5.5 7Z" fill="#ddd"/></svg>
<div class="t" style="left:1161px;top:227.8px;">Scale:</div>
<div class="num" style="left:1153.7px;top:240.5px;width:91.6px;height:48.599999999999994px;border-radius:7px"></div>
<svg style="position:absolute;left:1158.7px;top:244.6px" width="5" height="8"><path d="M4 0.5 L0.8 4 L4 7.5Z" fill="#6d6d6d"/></svg>
<svg style="position:absolute;left:1235.3px;top:244.6px" width="5" height="8"><path d="M1 0.5 L4.2 4 L1 7.5Z" fill="#6d6d6d"/></svg>
<div class="t" style="left:1166.7px;top:244.1px;">X:</div>
<div class="t" style="right:367.70000000000005px;top:244.1px;">-0.006</div>
<div class="" style="left:1154.2px;top:256.2px;width:90.6px;height:1px;background:#3a3a3a"></div>
<svg style="position:absolute;left:1158.7px;top:260.8px" width="5" height="8"><path d="M4 0.5 L0.8 4 L4 7.5Z" fill="#6d6d6d"/></svg>
<svg style="position:absolute;left:1235.3px;top:260.8px" width="5" height="8"><path d="M1 0.5 L4.2 4 L1 7.5Z" fill="#6d6d6d"/></svg>
<div class="t" style="left:1166.7px;top:260.3px;">Y:</div>
<div class="t" style="right:367.70000000000005px;top:260.3px;">-0.006</div>
<div class="" style="left:1154.2px;top:272.4px;width:90.6px;height:1px;background:#3a3a3a"></div>
<svg style="position:absolute;left:1158.7px;top:277.0px" width="5" height="8"><path d="M4 0.5 L0.8 4 L4 7.5Z" fill="#6d6d6d"/></svg>
<svg style="position:absolute;left:1235.3px;top:277.0px" width="5" height="8"><path d="M1 0.5 L4.2 4 L1 7.5Z" fill="#6d6d6d"/></svg>
<div class="t" style="left:1166.7px;top:276.5px;">Z:</div>
<div class="t" style="right:367.70000000000005px;top:276.5px;">-0.006</div>
<div class="btn" style="left:1253.3px;top:240.5px;width:22px;height:16.2px;border-radius:4px 4px 0 0"></div>
<svg style="position:absolute;left:1258px;top:242.7px" width="12" height="12"><path d="M2.5 5.5 V3.5 A2.5 2.5 0 0 1 7.5 3.5" stroke="#111" stroke-width="1.1" fill="none"/><rect x="4" y="5" width="7" height="6" fill="#f2f2f2" stroke="#222" stroke-width="0.8"/><rect x="7" y="7.5" width="1" height="1.2" fill="#333"/></svg>
<div class="btn" style="left:1253.3px;top:256.7px;width:22px;height:16.2px;border-radius:0"></div>
<svg style="position:absolute;left:1258px;top:258.9px" width="12" height="12"><path d="M2.5 5.5 V3.5 A2.5 2.5 0 0 1 7.5 3.5" stroke="#111" stroke-width="1.1" fill="none"/><rect x="4" y="5" width="7" height="6" fill="#f2f2f2" stroke="#222" stroke-width="0.8"/><rect x="7" y="7.5" width="1" height="1.2" fill="#333"/></svg>
<div class="btn" style="left:1253.3px;top:272.9px;width:22px;height:16.2px;border-radius:0 0 4px 4px"></div>
<svg style="position:absolute;left:1258px;top:275.09999999999997px" width="12" height="12"><path d="M2.5 5.5 V3.5 A2.5 2.5 0 0 1 7.5 3.5" stroke="#111" stroke-width="1.1" fill="none"/><rect x="4" y="5" width="7" height="6" fill="#f2f2f2" stroke="#222" stroke-width="0.8"/><rect x="7" y="7.5" width="1" height="1.2" fill="#333"/></svg>
<div class="t" style="left:1161px;top:296.3px;">Dimensions:</div>
<div class="num" style="left:1153.7px;top:309px;width:121.6px;height:48.599999999999994px;border-radius:7px"></div>
<svg style="position:absolute;left:1158.7px;top:313.1px" width="5" height="8"><path d="M4 0.5 L0.8 4 L4 7.5Z" fill="#6d6d6d"/></svg>
<svg style="position:absolute;left:1265.3px;top:313.1px" width="5" height="8"><path d="M1 0.5 L4.2 4 L1 7.5Z" fill="#6d6d6d"/></svg>
<div class="t" style="left:1166.7px;top:312.6px;">X:</div>
<div class="t" style="right:337.70000000000005px;top:312.6px;">0.073</div>
<div class="" style="left:1154.2px;top:324.7px;width:120.6px;height:1px;background:#3a3a3a"></div>
<svg style="position:absolute;left:1158.7px;top:329.3px" width="5" height="8"><path d="M4 0.5 L0.8 4 L4 7.5Z" fill="#6d6d6d"/></svg>
<svg style="position:absolute;left:1265.3px;top:329.3px" width="5" height="8"><path d="M1 0.5 L4.2 4 L1 7.5Z" fill="#6d6d6d"/></svg>
<div class="t" style="left:1166.7px;top:328.8px;">Y:</div>
<div class="t" style="right:337.70000000000005px;top:328.8px;">0.132</div>
<div class="" style="left:1154.2px;top:340.9px;width:120.6px;height:1px;background:#3a3a3a"></div>
<svg style="position:absolute;left:1158.7px;top:345.5px" width="5" height="8"><path d="M4 0.5 L0.8 4 L4 7.5Z" fill="#6d6d6d"/></svg>
<svg style="position:absolute;left:1265.3px;top:345.5px" width="5" height="8"><path d="M1 0.5 L4.2 4 L1 7.5Z" fill="#6d6d6d"/></svg>
<div class="t" style="left:1166.7px;top:345.0px;">Z:</div>
<div class="t" style="right:337.70000000000005px;top:345.0px;">0.050</div>
<div class="sep" style="left:1151px;top:365.5px;width:133px;height:2px;"></div>
<div class="tri" style="left:1158.5px;top:373.0px;width:0px;height:0px;"></div>
<div class="chk" style="left:1170.5px;top:370.5px;width:12px;height:12px;"><svg width="12" height="12" style="position:absolute;left:0;top:-2px"><path d="M2.5 6 L5 9 L10.5 1.5" stroke="#eee" stroke-width="1.8" fill="none"/></svg></div>
<div class="t hdr" style="left:1185.5px;top:371.3px;">Grease Pencil</div>
<div class="grip" style="left:1265px;top:374.0px;width:9px;height:5px;"></div>
<div class="" style="left:1153.7px;top:392.5px;width:121.6px;height:16.2px;background:linear-gradient(#4a4a4a,#383838);border:1px solid #151515;border-radius:4px"></div>
<div class="" style="left:1153.7px;top:392.5px;width:60px;height:16.2px;background:linear-gradient(#6b93d3,#4f78b9);border:1px solid #151515;border-radius:4px 0 0 4px"></div>
<div class="t" style="left:1083.5px;width:200px;text-align:center;top:396.3px;">Scene</div>
<div class="t w" style="left:1144px;width:200px;text-align:center;top:396.3px;">Object</div>
<div class="btn" style="left:1153.7px;top:413px;width:121.6px;height:16.2px;"></div>
<div class="" style="left:1153.7px;top:413px;width:27px;height:16.2px;background:linear-gradient(#4a4a4a,#383838);border:1px solid #151515;border-radius:4px 0 0 4px"></div>
<svg style="position:absolute;left:1156px;top:415px" width="13" height="12"><path d="M2 10.5 L10 2.5" stroke="#e8c040" stroke-width="2.6"/><path d="M2 10.5 L3 8" stroke="#fff" stroke-width="1"/></svg>
<svg style="position:absolute;left:1171px;top:415px" width="6" height="12"><path d="M0.5 5 L3 1 L5.5 5Z M0.5 7 L3 11 L5.5 7Z" fill="#aaa"/></svg>
<svg style="position:absolute;left:1184px;top:415px" width="12" height="12"><path d="M6 1.5V10.5M1.5 6H10.5" stroke="#111" stroke-width="2.4"/><path d="M6 1.5V10.5M1.5 6H10.5" stroke="#eee" stroke-width="1"/></svg>
<div class="t" style="left:1133px;width:200px;text-align:center;top:416.8px;">New</div>
<div class="btn" style="left:1153.7px;top:434.5px;width:121.6px;height:16.5px;"></div>
<div class="t" style="left:1193px;top:438.35px;">New Layer</div>
<div class="sep" style="left:1151px;top:456px;width:133px;height:2px;"></div>
<div class="tri" style="left:1158.5px;top:464.0px;width:0px;height:0px;"></div>
<div class="t hdr" style="left:1169.5px;top:462.3px;">View</div>
<div class="grip" style="left:1265px;top:465.0px;width:9px;height:5px;"></div>
<div class="num" style="left:1153.7px;top:484px;width:121.6px;height:16.2px;border-radius:7px"></div>
<svg style="position:absolute;left:1158.7px;top:488.1px" width="5" height="8"><path d="M4 0.5 L0.8 4 L4 7.5Z" fill="#6d6d6d"/></svg>
<svg style="position:absolute;left:1265.3px;top:488.1px" width="5" height="8"><path d="M1 0.5 L4.2 4 L1 7.5Z" fill="#6d6d6d"/></svg>
<div class="t" style="left:1166.7px;top:487.6px;">Lens:</div>
<div class="t" style="right:337.70000000000005px;top:487.6px;">35.000</div>
<div class="t" style="left:1161px;top:506.8px;">Lock to Object:</div>
<div class="" style="left:1153.7px;top:520px;width:121.6px;height:16.5px;background:linear-gradient(#a6a6a6,#b6b6b6);border:1px solid #333;border-radius:4px"></div>
<svg style="position:absolute;left:1158px;top:522px" width="12" height="12"><path d="M6 1 L11 3.5 L11 8.5 L6 11 L1 8.5 L1 3.5Z" fill="#e09040" stroke="#7a4a10" stroke-width="0.7"/><path d="M1 3.5 L6 6 L11 3.5 M6 6 V11" stroke="#f8c080" stroke-width="0.7" fill="none"/></svg>
<svg style="position:absolute;left:1261px;top:522px" width="12" height="12"><path d="M1.5 10.5 L7 5" stroke="#111" stroke-width="1.6"/><path d="M6.5 3 L9.5 6 M8 1.5 L10.5 4" stroke="#111" stroke-width="2"/></svg>
<div class="chk" style="left:1157px;top:542.5px;width:12px;height:12px;"></div>
<div class="t" style="left:1174px;top:543.8px;">Lock to Cursor</div>
<div class="chk" style="left:1157px;top:563px;width:12px;height:12px;"></div>
<div class="t" style="left:1174px;top:564.3px;">Lock Camera to View</div>
<div class="t" style="left:1161px;top:585.8px;">Clip:</div>
<div class="num" style="left:1153.7px;top:598px;width:121.6px;height:32.4px;border-radius:7px"></div>
<svg style="position:absolute;left:1158.7px;top:602.1px" width="5" height="8"><path d="M4 0.5 L0.8 4 L4 7.5Z" fill="#6d6d6d"/></svg>
<svg style="position:absolute;left:1265.3px;top:602.1px" width="5" height="8"><path d="M1 0.5 L4.2 4 L1 7.5Z" fill="#6d6d6d"/></svg>
<div class="t" style="left:1166.7px;top:601.6px;">Start:</div>
<div class="t" style="right:337.70000000000005px;top:601.6px;">0.100</div>
<div class="" style="left:1154.2px;top:613.7px;width:120.6px;height:1px;background:#3a3a3a"></div>
<svg style="position:absolute;left:1158.7px;top:618.3000000000001px" width="5" height="8"><path d="M4 0.5 L0.8 4 L4 7.5Z" fill="#6d6d6d"/></svg>
<svg style="position:absolute;left:1265.3px;top:618.3000000000001px" width="5" height="8"><path d="M1 0.5 L4.2 4 L1 7.5Z" fill="#6d6d6d"/></svg>
<div class="t" style="left:1166.7px;top:617.8000000000001px;">End:</div>
<div class="t" style="right:337.70000000000005px;top:617.8000000000001px;">1000.000</div>
<div class="t" style="left:1161px;top:634.8px;color:#5a5a5a">Local Camera:</div>
<div class="" style="left:1153.7px;top:648px;width:121.6px;height:16.5px;background:linear-gradient(#8f8f8f,#999);border:1px solid #666;border-radius:4px"></div>
<svg style="position:absolute;left:1158px;top:650px" width="12" height="12" opacity="0.6"><path d="M6 1 L11 3.5 L11 8.5 L6 11 L1 8.5 L1 3.5Z" fill="#e09040"/></svg>
<div class="t" style="left:1174px;top:651.8px;color:#5e5e5e">Camera</div>
<svg style="position:absolute;left:1261px;top:651px" width="11" height="11"><path d="M1.5 1.5 L9.5 9.5 M9.5 1.5 L1.5 9.5" stroke="#444" stroke-width="2.4"/><path d="M1.5 1.5 L9.5 9.5 M9.5 1.5 L1.5 9.5" stroke="#ddd" stroke-width="1.1"/></svg>
<div class="chk" style="left:1157px;top:671.5px;width:12px;height:12px;"></div>
<div class="t" style="left:1174px;top:672.8px;">Render Border</div>
<div class="sep" style="left:1151px;top:690px;width:133px;height:2px;"></div>
<div class="tri" style="left:1158.5px;top:698.5px;width:0px;height:0px;"></div>
<div class="t hdr" style="left:1169.5px;top:696.8px;">3D Cursor</div>
<div class="grip" style="left:1265px;top:699.5px;width:9px;height:5px;"></div>
<div class="t" style="left:1161px;top:722.8px;">Location:</div>
<div class="num" style="left:1153.7px;top:736px;width:121.6px;height:8px;border-radius:7px 7px 0 0"></div>
<div class="" style="left:1297px;top:42px;width:303px;height:398.5px;background:#747474"></div>
<div class="" style="left:1296.5px;top:42px;width:1.5px;height:699px;background:#161616"></div>
<div class="" style="left:1298px;top:63px;width:302px;height:377px;background:#787878;overflow:hidden"></div>
<div class="" style="left:1298px;top:71.37px;width:293px;height:16.67px;background:#727272"></div>
<div class="" style="left:1298px;top:104.71000000000001px;width:293px;height:16.67px;background:#727272"></div>
<div class="" style="left:1298px;top:138.05px;width:293px;height:16.67px;background:#727272"></div>
<div class="" style="left:1298px;top:171.39000000000001px;width:293px;height:16.67px;background:#727272"></div>
<div class="" style="left:1298px;top:204.73000000000002px;width:293px;height:16.67px;background:#727272"></div>
<div class="" style="left:1298px;top:238.07px;width:293px;height:16.67px;background:#727272"></div>
<div class="" style="left:1298px;top:271.41px;width:293px;height:16.67px;background:#727272"></div>
<div class="" style="left:1298px;top:304.75px;width:293px;height:16.67px;background:#727272"></div>
<div class="" style="left:1298px;top:338.09000000000003px;width:293px;height:16.67px;background:#727272"></div>
<div class="" style="left:1298px;top:371.43px;width:293px;height:16.67px;background:#727272"></div>
<div class="" style="left:1298px;top:404.77000000000004px;width:293px;height:16.67px;background:#727272"></div>
<div class="" style="left:1298px;top:438.11px;width:293px;height:16.67px;background:#727272"></div>
<div class="" style="left:1298px;top:63px;width:22.5px;height:377px;background:#767676"></div>
<div class="" style="left:1320.4px;top:63px;width:1px;height:377px;background:#555"></div>
<div class="" style="left:1540px;top:63px;width:1px;height:377px;background:#676767"></div>
<div class="" style="left:1556.5px;top:63px;width:1px;height:377px;background:#676767"></div>
<div class="" style="left:1573px;top:63px;width:1px;height:377px;background:#676767"></div>
<div class="" style="left:1321px;top:65.5px;width:12px;height:1px;background:#555"></div>
<svg style="position:absolute;left:1334px;top:58.0px" width="13" height="13"><path d="M6.5 1.5 V7 L2 11 M6.5 7 L11 11" stroke="#5a3000" stroke-width="2.6" fill="none" stroke-linecap="round"/><path d="M6.5 1.5 V7 L2 11 M6.5 7 L11 11" stroke="#f0b050" stroke-width="1.5" fill="none" stroke-linecap="round"/></svg>
<div class="t" style="left:1349px;top:59.099999999999994px;color:#111">$$$DUMMY.Group10</div>
<svg style="position:absolute;left:1542.5px;top:60.5px" width="12" height="9"><path d="M0.8 4.5 Q6 -1 11.2 4.5 Q6 10 0.8 4.5Z" fill="#f4f4f4" stroke="#222" stroke-width="0.8"/><circle cx="6" cy="4.5" r="2" fill="#333"/></svg>
<svg style="position:absolute;left:1561px;top:58.5px" width="10" height="12"><path d="M1.5 1 L1.5 10 L4 7.5 L6 11 L7.5 10.2 L5.6 7 L8.8 7Z" fill="#f0f0f0" stroke="#1a1a1a" stroke-width="0.9"/></svg>
<svg style="position:absolute;left:1575px;top:58.5px" width="13" height="12"><rect x="0.8" y="2.5" width="11.2" height="8.5" rx="1" fill="#e8e8e8" stroke="#222" stroke-width="0.9"/><rect x="3" y="0.8" width="4" height="2" fill="#e8e8e8" stroke="#222" stroke-width="0.7"/><circle cx="6.5" cy="6.8" r="2.6" fill="#c85060" stroke="#222" stroke-width="0.8"/><circle cx="6.5" cy="6.8" r="1.2" fill="#eee"/></svg>
<div class="" style="left:1321px;top:82.17px;width:12px;height:1px;background:#555"></div>
<svg style="position:absolute;left:1334px;top:74.67px" width="13" height="13"><path d="M6.5 1.5 V7 L2 11 M6.5 7 L11 11" stroke="#5a3000" stroke-width="2.6" fill="none" stroke-linecap="round"/><path d="M6.5 1.5 V7 L2 11 M6.5 7 L11 11" stroke="#f0b050" stroke-width="1.5" fill="none" stroke-linecap="round"/></svg>
<div class="t" style="left:1349px;top:75.77px;color:#111">$$$DUMMY.Group100</div>
<svg style="position:absolute;left:1542.5px;top:77.17px" width="12" height="9"><path d="M0.8 4.5 Q6 -1 11.2 4.5 Q6 10 0.8 4.5Z" fill="#f4f4f4" stroke="#222" stroke-width="0.8"/><circle cx="6" cy="4.5" r="2" fill="#333"/></svg>
<svg style="position:absolute;left:1561px;top:75.17px" width="10" height="12"><path d="M1.5 1 L1.5 10 L4 7.5 L6 11 L7.5 10.2 L5.6 7 L8.8 7Z" fill="#f0f0f0" stroke="#1a1a1a" stroke-width="0.9"/></svg>
<svg style="position:absolute;left:1575px;top:75.17px" width="13" height="12"><rect x="0.8" y="2.5" width="11.2" height="8.5" rx="1" fill="#e8e8e8" stroke="#222" stroke-width="0.9"/><rect x="3" y="0.8" width="4" height="2" fill="#e8e8e8" stroke="#222" stroke-width="0.7"/><circle cx="6.5" cy="6.8" r="2.6" fill="#c85060" stroke="#222" stroke-width="0.8"/><circle cx="6.5" cy="6.8" r="1.2" fill="#eee"/></svg>
<div class="" style="left:1321px;top:98.84px;width:12px;height:1px;background:#555"></div>
<svg style="position:absolute;left:1334px;top:91.34px" width="13" height="13"><path d="M6.5 1.5 V7 L2 11 M6.5 7 L11 11" stroke="#5a3000" stroke-width="2.6" fill="none" stroke-linecap="round"/><path d="M6.5 1.5 V7 L2 11 M6.5 7 L11 11" stroke="#f0b050" stroke-width="1.5" fill="none" stroke-linecap="round"/></svg>
<div class="t" style="left:1349px;top:92.44px;color:#111">$$$DUMMY.Group102</div>
<svg style="position:absolute;left:1542.5px;top:93.84px" width="12" height="9"><path d="M0.8 4.5 Q6 -1 11.2 4.5 Q6 10 0.8 4.5Z" fill="#f4f4f4" stroke="#222" stroke-width="0.8"/><circle cx="6" cy="4.5" r="2" fill="#333"/></svg>
<svg style="position:absolute;left:1561px;top:91.84px" width="10" height="12"><path d="M1.5 1 L1.5 10 L4 7.5 L6 11 L7.5 10.2 L5.6 7 L8.8 7Z" fill="#f0f0f0" stroke="#1a1a1a" stroke-width="0.9"/></svg>
<svg style="position:absolute;left:1575px;top:91.84px" width="13" height="12"><rect x="0.8" y="2.5" width="11.2" height="8.5" rx="1" fill="#e8e8e8" stroke="#222" stroke-width="0.9"/><rect x="3" y="0.8" width="4" height="2" fill="#e8e8e8" stroke="#222" stroke-width="0.7"/><circle cx="6.5" cy="6.8" r="2.6" fill="#c85060" stroke="#222" stroke-width="0.8"/><circle cx="6.5" cy="6.8" r="1.2" fill="#eee"/></svg>
<div class="" style="left:1321px;top:115.51px;width:12px;height:1px;background:#555"></div>
<svg style="position:absolute;left:1334px;top:108.01px" width="13" height="13"><path d="M6.5 1.5 V7 L2 11 M6.5 7 L11 11" stroke="#5a3000" stroke-width="2.6" fill="none" stroke-linecap="round"/><path d="M6.5 1.5 V7 L2 11 M6.5 7 L11 11" stroke="#f0b050" stroke-width="1.5" fill="none" stroke-linecap="round"/></svg>
<div class="t" style="left:1349px;top:109.11px;color:#111">$$$DUMMY.Group103</div>
<svg style="position:absolute;left:1542.5px;top:110.51px" width="12" height="9"><path d="M0.8 4.5 Q6 -1 11.2 4.5 Q6 10 0.8 4.5Z" fill="#f4f4f4" stroke="#222" stroke-width="0.8"/><circle cx="6" cy="4.5" r="2" fill="#333"/></svg>
<svg style="position:absolute;left:1561px;top:108.51px" width="10" height="12"><path d="M1.5 1 L1.5 10 L4 7.5 L6 11 L7.5 10.2 L5.6 7 L8.8 7Z" fill="#f0f0f0" stroke="#1a1a1a" stroke-width="0.9"/></svg>
<svg style="position:absolute;left:1575px;top:108.51px" width="13" height="12"><rect x="0.8" y="2.5" width="11.2" height="8.5" rx="1" fill="#e8e8e8" stroke="#222" stroke-width="0.9"/><rect x="3" y="0.8" width="4" height="2" fill="#e8e8e8" stroke="#222" stroke-width="0.7"/><circle cx="6.5" cy="6.8" r="2.6" fill="#c85060" stroke="#222" stroke-width="0.8"/><circle cx="6.5" cy="6.8" r="1.2" fill="#eee"/></svg>
<div class="" style="left:1321px;top:132.18px;width:12px;height:1px;background:#555"></div>
<svg style="position:absolute;left:1334px;top:124.68px" width="13" height="13"><path d="M6.5 1.5 V7 L2 11 M6.5 7 L11 11" stroke="#5a3000" stroke-width="2.6" fill="none" stroke-linecap="round"/><path d="M6.5 1.5 V7 L2 11 M6.5 7 L11 11" stroke="#f0b050" stroke-width="1.5" fill="none" stroke-linecap="round"/></svg>
<div class="t" style="left:1349px;top:125.78000000000002px;color:#111">$$$DUMMY.Group104</div>
<svg style="position:absolute;left:1542.5px;top:127.18px" width="12" height="9"><path d="M0.8 4.5 Q6 -1 11.2 4.5 Q6 10 0.8 4.5Z" fill="#f4f4f4" stroke="#222" stroke-width="0.8"/><circle cx="6" cy="4.5" r="2" fill="#333"/></svg>
<svg style="position:absolute;left:1561px;top:125.18px" width="10" height="12"><path d="M1.5 1 L1.5 10 L4 7.5 L6 11 L7.5 10.2 L5.6 7 L8.8 7Z" fill="#f0f0f0" stroke="#1a1a1a" stroke-width="0.9"/></svg>
<svg style="position:absolute;left:1575px;top:125.18px" width="13" height="12"><rect x="0.8" y="2.5" width="11.2" height="8.5" rx="1" fill="#e8e8e8" stroke="#222" stroke-width="0.9"/><rect x="3" y="0.8" width="4" height="2" fill="#e8e8e8" stroke="#222" stroke-width="0.7"/><circle cx="6.5" cy="6.8" r="2.6" fill="#c85060" stroke="#222" stroke-width="0.8"/><circle cx="6.5" cy="6.8" r="1.2" fill="#eee"/></svg>
<div class="" style="left:1321px;top:148.85000000000002px;width:12px;height:1px;background:#555"></div>
<svg style="position:absolute;left:1334px;top:141.35000000000002px" width="13" height="13"><path d="M6.5 1.5 V7 L2 11 M6.5 7 L11 11" stroke="#5a3000" stroke-width="2.6" fill="none" stroke-linecap="round"/><path d="M6.5 1.5 V7 L2 11 M6.5 7 L11 11" stroke="#f0b050" stroke-width="1.5" fill="none" stroke-linecap="round"/></svg>
<div class="t" style="left:1349px;top:142.45000000000005px;color:#111">$$$DUMMY.Group105</div>
<svg style="position:absolute;left:1542.5px;top:143.85000000000002px" width="12" height="9"><path d="M0.8 4.5 Q6 -1 11.2 4.5 Q6 10 0.8 4.5Z" fill="#f4f4f4" stroke="#222" stroke-width="0.8"/><circle cx="6" cy="4.5" r="2" fill="#333"/></svg>
<svg style="position:absolute;left:1561px;top:141.85000000000002px" width="10" height="12"><path d="M1.5 1 L1.5 10 L4 7.5 L6 11 L7.5 10.2 L5.6 7 L8.8 7Z" fill="#f0f0f0" stroke="#1a1a1a" stroke-width="0.9"/></svg>
<svg style="position:absolute;left:1575px;top:141.85000000000002px" width="13" height="12"><rect x="0.8" y="2.5" width="11.2" height="8.5" rx="1" fill="#e8e8e8" stroke="#222" stroke-width="0.9"/><rect x="3" y="0.8" width="4" height="2" fill="#e8e8e8" stroke="#222" stroke-width="0.7"/><circle cx="6.5" cy="6.8" r="2.6" fill="#c85060" stroke="#222" stroke-width="0.8"/><circle cx="6.5" cy="6.8" r="1.2" fill="#eee"/></svg>
<div class="" style="left:1321px;top:165.52px;width:12px;height:1px;background:#555"></div>
<svg style="position:absolute;left:1334px;top:158.02px" width="13" height="13"><path d="M6.5 1.5 V7 L2 11 M6.5 7 L11 11" stroke="#5a3000" stroke-width="2.6" fill="none" stroke-linecap="round"/><path d="M6.5 1.5 V7 L2 11 M6.5 7 L11 11" stroke="#f0b050" stroke-width="1.5" fill="none" stroke-linecap="round"/></svg>
<div class="t" style="left:1349px;top:159.12000000000003px;color:#111">$$$DUMMY.Group106</div>
<svg style="position:absolute;left:1542.5px;top:160.52px" width="12" height="9"><path d="M0.8 4.5 Q6 -1 11.2 4.5 Q6 10 0.8 4.5Z" fill="#f4f4f4" stroke="#222" stroke-width="0.8"/><circle cx="6" cy="4.5" r="2" fill="#333"/></svg>
<svg style="position:absolute;left:1561px;top:158.52px" width="10" height="12"><path d="M1.5 1 L1.5 10 L4 7.5 L6 11 L7.5 10.2 L5.6 7 L8.8 7Z" fill="#f0f0f0" stroke="#1a1a1a" stroke-width="0.9"/></svg>
<svg style="position:absolute;left:1575px;top:158.52px" width="13" height="12"><rect x="0.8" y="2.5" width="11.2" height="8.5" rx="1" fill="#e8e8e8" stroke="#222" stroke-width="0.9"/><rect x="3" y="0.8" width="4" height="2" fill="#e8e8e8" stroke="#222" stroke-width="0.7"/><circle cx="6.5" cy="6.8" r="2.6" fill="#c85060" stroke="#222" stroke-width="0.8"/><circle cx="6.5" cy="6.8" r="1.2" fill="#eee"/></svg>
<div class="" style="left:1321px;top:182.19px;width:12px;height:1px;background:#555"></div>
<svg style="position:absolute;left:1334px;top:174.69px" width="13" height="13"><path d="M6.5 1.5 V7 L2 11 M6.5 7 L11 11" stroke="#5a3000" stroke-width="2.6" fill="none" stroke-linecap="round"/><path d="M6.5 1.5 V7 L2 11 M6.5 7 L11 11" stroke="#f0b050" stroke-width="1.5" fill="none" stroke-linecap="round"/></svg>
<div class="t" style="left:1349px;top:175.79000000000002px;color:#111">$$$DUMMY.Group107</div>
<svg style="position:absolute;left:1542.5px;top:177.19px" width="12" height="9"><path d="M0.8 4.5 Q6 -1 11.2 4.5 Q6 10 0.8 4.5Z" fill="#f4f4f4" stroke="#222" stroke-width="0.8"/><circle cx="6" cy="4.5" r="2" fill="#333"/></svg>
<svg style="position:absolute;left:1561px;top:175.19px" width="10" height="12"><path d="M1.5 1 L1.5 10 L4 7.5 L6 11 L7.5 10.2 L5.6 7 L8.8 7Z" fill="#f0f0f0" stroke="#1a1a1a" stroke-width="0.9"/></svg>
<svg style="position:absolute;left:1575px;top:175.19px" width="13" height="12"><rect x="0.8" y="2.5" width="11.2" height="8.5" rx="1" fill="#e8e8e8" stroke="#222" stroke-width="0.9"/><rect x="3" y="0.8" width="4" height="2" fill="#e8e8e8" stroke="#222" stroke-width="0.7"/><circle cx="6.5" cy="6.8" r="2.6" fill="#c85060" stroke="#222" stroke-width="0.8"/><circle cx="6.5" cy="6.8" r="1.2" fill="#eee"/></svg>
<div class="" style="left:1321px;top:198.86px;width:12px;height:1px;background:#555"></div>
<svg style="position:absolute;left:1334px;top:191.36px" width="13" height="13"><path d="M6.5 1.5 V7 L2 11 M6.5 7 L11 11" stroke="#5a3000" stroke-width="2.6" fill="none" stroke-linecap="round"/><path d="M6.5 1.5 V7 L2 11 M6.5 7 L11 11" stroke="#f0b050" stroke-width="1.5" fill="none" stroke-linecap="round"/></svg>
<div class="t" style="left:1349px;top:192.46000000000004px;color:#111">$$$DUMMY.Group108</div>
<svg style="position:absolute;left:1542.5px;top:193.86px" width="12" height="9"><path d="M0.8 4.5 Q6 -1 11.2 4.5 Q6 10 0.8 4.5Z" fill="#f4f4f4" stroke="#222" stroke-width="0.8"/><circle cx="6" cy="4.5" r="2" fill="#333"/></svg>
<svg style="position:absolute;left:1561px;top:191.86px" width="10" height="12"><path d="M1.5 1 L1.5 10 L4 7.5 L6 11 L7.5 10.2 L5.6 7 L8.8 7Z" fill="#f0f0f0" stroke="#1a1a1a" stroke-width="0.9"/></svg>
<svg style="position:absolute;left:1575px;top:191.86px" width="13" height="12"><rect x="0.8" y="2.5" width="11.2" height="8.5" rx="1" fill="#e8e8e8" stroke="#222" stroke-width="0.9"/><rect x="3" y="0.8" width="4" height="2" fill="#e8e8e8" stroke="#222" stroke-width="0.7"/><circle cx="6.5" cy="6.8" r="2.6" fill="#c85060" stroke="#222" stroke-width="0.8"/><circle cx="6.5" cy="6.8" r="1.2" fill="#eee"/></svg>
<div class="" style="left:1321px;top:215.53000000000003px;width:12px;height:1px;background:#555"></div>
<svg style="position:absolute;left:1334px;top:208.03000000000003px" width="13" height="13"><path d="M6.5 1.5 V7 L2 11 M6.5 7 L11 11" stroke="#5a3000" stroke-width="2.6" fill="none" stroke-linecap="round"/><path d="M6.5 1.5 V7 L2 11 M6.5 7 L11 11" stroke="#f0b050" stroke-width="1.5" fill="none" stroke-linecap="round"/></svg>
<div class="t" style="left:1349px;top:209.13000000000005px;color:#111">$$$DUMMY.Group11</div>
<svg style="position:absolute;left:1542.5px;top:210.53000000000003px" width="12" height="9"><path d="M0.8 4.5 Q6 -1 11.2 4.5 Q6 10 0.8 4.5Z" fill="#f4f4f4" stroke="#222" stroke-width="0.8"/><circle cx="6" cy="4.5" r="2" fill="#333"/></svg>
<svg style="position:absolute;left:1561px;top:208.53000000000003px" width="10" height="12"><path d="M1.5 1 L1.5 10 L4 7.5 L6 11 L7.5 10.2 L5.6 7 L8.8 7Z" fill="#f0f0f0" stroke="#1a1a1a" stroke-width="0.9"/></svg>
<svg style="position:absolute;left:1575px;top:208.53000000000003px" width="13" height="12"><rect x="0.8" y="2.5" width="11.2" height="8.5" rx="1" fill="#e8e8e8" stroke="#222" stroke-width="0.9"/><rect x="3" y="0.8" width="4" height="2" fill="#e8e8e8" stroke="#222" stroke-width="0.7"/><circle cx="6.5" cy="6.8" r="2.6" fill="#c85060" stroke="#222" stroke-width="0.8"/><circle cx="6.5" cy="6.8" r="1.2" fill="#eee"/></svg>
<div class="" style="left:1321px;top:232.20000000000002px;width:12px;height:1px;background:#555"></div>
<svg style="position:absolute;left:1334px;top:224.70000000000002px" width="13" height="13"><path d="M6.5 1.5 V7 L2 11 M6.5 7 L11 11" stroke="#5a3000" stroke-width="2.6" fill="none" stroke-linecap="round"/><path d="M6.5 1.5 V7 L2 11 M6.5 7 L11 11" stroke="#f0b050" stroke-width="1.5" fill="none" stroke-linecap="round"/></svg>
<div class="t" style="left:1349px;top:225.80000000000004px;color:#111">$$$DUMMY.Group110</div>
<svg style="position:absolute;left:1542.5px;top:227.20000000000002px" width="12" height="9"><path d="M0.8 4.5 Q6 -1 11.2 4.5 Q6 10 0.8 4.5Z" fill="#f4f4f4" stroke="#222" stroke-width="0.8"/><circle cx="6" cy="4.5" r="2" fill="#333"/></svg>
<svg style="position:absolute;left:1561px;top:225.20000000000002px" width="10" height="12"><path d="M1.5 1 L1.5 10 L4 7.5 L6 11 L7.5 10.2 L5.6 7 L8.8 7Z" fill="#f0f0f0" stroke="#1a1a1a" stroke-width="0.9"/></svg>
<svg style="position:absolute;left:1575px;top:225.20000000000002px" width="13" height="12"><rect x="0.8" y="2.5" width="11.2" height="8.5" rx="1" fill="#e8e8e8" stroke="#222" stroke-width="0.9"/><rect x="3" y="0.8" width="4" height="2" fill="#e8e8e8" stroke="#222" stroke-width="0.7"/><circle cx="6.5" cy="6.8" r="2.6" fill="#c85060" stroke="#222" stroke-width="0.8"/><circle cx="6.5" cy="6.8" r="1.2" fill="#eee"/></svg>
<div class="" style="left:1321px;top:248.87px;width:12px;height:1px;background:#555"></div>
<svg style="position:absolute;left:1334px;top:241.37px" width="13" height="13"><path d="M6.5 1.5 V7 L2 11 M6.5 7 L11 11" stroke="#5a3000" stroke-width="2.6" fill="none" stroke-linecap="round"/><path d="M6.5 1.5 V7 L2 11 M6.5 7 L11 11" stroke="#f0b050" stroke-width="1.5" fill="none" stroke-linecap="round"/></svg>
<div class="t" style="left:1349px;top:242.47000000000003px;color:#111">$$$DUMMY.Group111</div>
<svg style="position:absolute;left:1542.5px;top:243.87px" width="12" height="9"><path d="M0.8 4.5 Q6 -1 11.2 4.5 Q6 10 0.8 4.5Z" fill="#f4f4f4" stroke="#222" stroke-width="0.8"/><circle cx="6" cy="4.5" r="2" fill="#333"/></svg>
<svg style="position:absolute;left:1561px;top:241.87px" width="10" height="12"><path d="M1.5 1 L1.5 10 L4 7.5 L6 11 L7.5 10.2 L5.6 7 L8.8 7Z" fill="#f0f0f0" stroke="#1a1a1a" stroke-width="0.9"/></svg>
<svg style="position:absolute;left:1575px;top:241.87px" width="13" height="12"><rect x="0.8" y="2.5" width="11.2" height="8.5" rx="1" fill="#e8e8e8" stroke="#222" stroke-width="0.9"/><rect x="3" y="0.8" width="4" height="2" fill="#e8e8e8" stroke="#222" stroke-width="0.7"/><circle cx="6.5" cy="6.8" r="2.6" fill="#c85060" stroke="#222" stroke-width="0.8"/><circle cx="6.5" cy="6.8" r="1.2" fill="#eee"/></svg>
<div class="" style="left:1321px;top:265.54px;width:12px;height:1px;background:#555"></div>
<svg style="position:absolute;left:1334px;top:258.04px" width="13" height="13"><path d="M6.5 1.5 V7 L2 11 M6.5 7 L11 11" stroke="#5a3000" stroke-width="2.6" fill="none" stroke-linecap="round"/><path d="M6.5 1.5 V7 L2 11 M6.5 7 L11 11" stroke="#f0b050" stroke-width="1.5" fill="none" stroke-linecap="round"/></svg>
<div class="t" style="left:1349px;top:259.14000000000004px;color:#111">$$$DUMMY.Group112</div>
<svg style="position:absolute;left:1542.5px;top:260.54px" width="12" height="9"><path d="M0.8 4.5 Q6 -1 11.2 4.5 Q6 10 0.8 4.5Z" fill="#f4f4f4" stroke="#222" stroke-width="0.8"/><circle cx="6" cy="4.5" r="2" fill="#333"/></svg>
<svg style="position:absolute;left:1561px;top:258.54px" width="10" height="12"><path d="M1.5 1 L1.5 10 L4 7.5 L6 11 L7.5 10.2 L5.6 7 L8.8 7Z" fill="#f0f0f0" stroke="#1a1a1a" stroke-width="0.9"/></svg>
<svg style="position:absolute;left:1575px;top:258.54px" width="13" height="12"><rect x="0.8" y="2.5" width="11.2" height="8.5" rx="1" fill="#e8e8e8" stroke="#222" stroke-width="0.9"/><rect x="3" y="0.8" width="4" height="2" fill="#e8e8e8" stroke="#222" stroke-width="0.7"/><circle cx="6.5" cy="6.8" r="2.6" fill="#c85060" stroke="#222" stroke-width="0.8"/><circle cx="6.5" cy="6.8" r="1.2" fill="#eee"/></svg>
<div class="" style="left:1321px;top:282.21000000000004px;width:12px;height:1px;background:#555"></div>
<svg style="position:absolute;left:1334px;top:274.71000000000004px" width="13" height="13"><path d="M6.5 1.5 V7 L2 11 M6.5 7 L11 11" stroke="#5a3000" stroke-width="2.6" fill="none" stroke-linecap="round"/><path d="M6.5 1.5 V7 L2 11 M6.5 7 L11 11" stroke="#f0b050" stroke-width="1.5" fill="none" stroke-linecap="round"/></svg>
<div class="t" style="left:1349px;top:275.81000000000006px;color:#111">$$$DUMMY.Group113</div>
<svg style="position:absolute;left:1542.5px;top:277.21000000000004px" width="12" height="9"><path d="M0.8 4.5 Q6 -1 11.2 4.5 Q6 10 0.8 4.5Z" fill="#f4f4f4" stroke="#222" stroke-width="0.8"/><circle cx="6" cy="4.5" r="2" fill="#333"/></svg>
<svg style="position:absolute;left:1561px;top:275.21000000000004px" width="10" height="12"><path d="M1.5 1 L1.5 10 L4 7.5 L6 11 L7.5 10.2 L5.6 7 L8.8 7Z" fill="#f0f0f0" stroke="#1a1a1a" stroke-width="0.9"/></svg>
<svg style="position:absolute;left:1575px;top:275.21000000000004px" width="13" height="12"><rect x="0.8" y="2.5" width="11.2" height="8.5" rx="1" fill="#e8e8e8" stroke="#222" stroke-width="0.9"/><rect x="3" y="0.8" width="4" height="2" fill="#e8e8e8" stroke="#222" stroke-width="0.7"/><circle cx="6.5" cy="6.8" r="2.6" fill="#c85060" stroke="#222" stroke-width="0.8"/><circle cx="6.5" cy="6.8" r="1.2" fill="#eee"/></svg>
<div class="" style="left:1321px;top:298.88px;width:12px;height:1px;background:#555"></div>
<svg style="position:absolute;left:1334px;top:291.38px" width="13" height="13"><path d="M6.5 1.5 V7 L2 11 M6.5 7 L11 11" stroke="#5a3000" stroke-width="2.6" fill="none" stroke-linecap="round"/><path d="M6.5 1.5 V7 L2 11 M6.5 7 L11 11" stroke="#f0b050" stroke-width="1.5" fill="none" stroke-linecap="round"/></svg>
<div class="t" style="left:1349px;top:292.48px;color:#111">$$$DUMMY.Group114</div>
<svg style="position:absolute;left:1542.5px;top:293.88px" width="12" height="9"><path d="M0.8 4.5 Q6 -1 11.2 4.5 Q6 10 0.8 4.5Z" fill="#f4f4f4" stroke="#222" stroke-width="0.8"/><circle cx="6" cy="4.5" r="2" fill="#333"/></svg>
<svg style="position:absolute;left:1561px;top:291.88px" width="10" height="12"><path d="M1.5 1 L1.5 10 L4 7.5 L6 11 L7.5 10.2 L5.6 7 L8.8 7Z" fill="#f0f0f0" stroke="#1a1a1a" stroke-width="0.9"/></svg>
<svg style="position:absolute;left:1575px;top:291.88px" width="13" height="12"><rect x="0.8" y="2.5" width="11.2" height="8.5" rx="1" fill="#e8e8e8" stroke="#222" stroke-width="0.9"/><rect x="3" y="0.8" width="4" height="2" fill="#e8e8e8" stroke="#222" stroke-width="0.7"/><circle cx="6.5" cy="6.8" r="2.6" fill="#c85060" stroke="#222" stroke-width="0.8"/><circle cx="6.5" cy="6.8" r="1.2" fill="#eee"/></svg>
<div class="" style="left:1321px;top:315.55px;width:12px;height:1px;background:#555"></div>
<svg style="position:absolute;left:1334px;top:308.05px" width="13" height="13"><path d="M6.5 1.5 V7 L2 11 M6.5 7 L11 11" stroke="#5a3000" stroke-width="2.6" fill="none" stroke-linecap="round"/><path d="M6.5 1.5 V7 L2 11 M6.5 7 L11 11" stroke="#f0b050" stroke-width="1.5" fill="none" stroke-linecap="round"/></svg>
<div class="t" style="left:1349px;top:309.15000000000003px;color:#111">$$$DUMMY.Group115</div>
<svg style="position:absolute;left:1542.5px;top:310.55px" width="12" height="9"><path d="M0.8 4.5 Q6 -1 11.2 4.5 Q6 10 0.8 4.5Z" fill="#f4f4f4" stroke="#222" stroke-width="0.8"/><circle cx="6" cy="4.5" r="2" fill="#333"/></svg>
<svg style="position:absolute;left:1561px;top:308.55px" width="10" height="12"><path d="M1.5 1 L1.5 10 L4 7.5 L6 11 L7.5 10.2 L5.6 7 L8.8 7Z" fill="#f0f0f0" stroke="#1a1a1a" stroke-width="0.9"/></svg>
<svg style="position:absolute;left:1575px;top:308.55px" width="13" height="12"><rect x="0.8" y="2.5" width="11.2" height="8.5" rx="1" fill="#e8e8e8" stroke="#222" stroke-width="0.9"/><rect x="3" y="0.8" width="4" height="2" fill="#e8e8e8" stroke="#222" stroke-width="0.7"/><circle cx="6.5" cy="6.8" r="2.6" fill="#c85060" stroke="#222" stroke-width="0.8"/><circle cx="6.5" cy="6.8" r="1.2" fill="#eee"/></svg>
<div class="" style="left:1321px;top:332.22px;width:12px;height:1px;background:#555"></div>
<svg style="position:absolute;left:1334px;top:324.72px" width="13" height="13"><path d="M6.5 1.5 V7 L2 11 M6.5 7 L11 11" stroke="#5a3000" stroke-width="2.6" fill="none" stroke-linecap="round"/><path d="M6.5 1.5 V7 L2 11 M6.5 7 L11 11" stroke="#f0b050" stroke-width="1.5" fill="none" stroke-linecap="round"/></svg>
<div class="t" style="left:1349px;top:325.82000000000005px;color:#111">$$$DUMMY.Group116</div>
<svg style="position:absolute;left:1542.5px;top:327.22px" width="12" height="9"><path d="M0.8 4.5 Q6 -1 11.2 4.5 Q6 10 0.8 4.5Z" fill="#f4f4f4" stroke="#222" stroke-width="0.8"/><circle cx="6" cy="4.5" r="2" fill="#333"/></svg>
<svg style="position:absolute;left:1561px;top:325.22px" width="10" height="12"><path d="M1.5 1 L1.5 10 L4 7.5 L6 11 L7.5 10.2 L5.6 7 L8.8 7Z" fill="#f0f0f0" stroke="#1a1a1a" stroke-width="0.9"/></svg>
<svg style="position:absolute;left:1575px;top:325.22px" width="13" height="12"><rect x="0.8" y="2.5" width="11.2" height="8.5" rx="1" fill="#e8e8e8" stroke="#222" stroke-width="0.9"/><rect x="3" y="0.8" width="4" height="2" fill="#e8e8e8" stroke="#222" stroke-width="0.7"/><circle cx="6.5" cy="6.8" r="2.6" fill="#c85060" stroke="#222" stroke-width="0.8"/><circle cx="6.5" cy="6.8" r="1.2" fill="#eee"/></svg>
<div class="" style="left:1321px;top:348.89000000000004px;width:12px;height:1px;background:#555"></div>
<svg style="position:absolute;left:1334px;top:341.39000000000004px" width="13" height="13"><path d="M6.5 1.5 V7 L2 11 M6.5 7 L11 11" stroke="#5a3000" stroke-width="2.6" fill="none" stroke-linecap="round"/><path d="M6.5 1.5 V7 L2 11 M6.5 7 L11 11" stroke="#f0b050" stroke-width="1.5" fill="none" stroke-linecap="round"/></svg>
<div class="t" style="left:1349px;top:342.49000000000007px;color:#111">$$$DUMMY.Group117</div>
<svg style="position:absolute;left:1542.5px;top:343.89000000000004px" width="12" height="9"><path d="M0.8 4.5 Q6 -1 11.2 4.5 Q6 10 0.8 4.5Z" fill="#f4f4f4" stroke="#222" stroke-width="0.8"/><circle cx="6" cy="4.5" r="2" fill="#333"/></svg>
<svg style="position:absolute;left:1561px;top:341.89000000000004px" width="10" height="12"><path d="M1.5 1 L1.5 10 L4 7.5 L6 11 L7.5 10.2 L5.6 7 L8.8 7Z" fill="#f0f0f0" stroke="#1a1a1a" stroke-width="0.9"/></svg>
<svg style="position:absolute;left:1575px;top:341.89000000000004px" width="13" height="12"><rect x="0.8" y="2.5" width="11.2" height="8.5" rx="1" fill="#e8e8e8" stroke="#222" stroke-width="0.9"/><rect x="3" y="0.8" width="4" height="2" fill="#e8e8e8" stroke="#222" stroke-width="0.7"/><circle cx="6.5" cy="6.8" r="2.6" fill="#c85060" stroke="#222" stroke-width="0.8"/><circle cx="6.5" cy="6.8" r="1.2" fill="#eee"/></svg>
<div class="" style="left:1321px;top:365.56000000000006px;width:12px;height:1px;background:#555"></div>
<svg style="position:absolute;left:1334px;top:358.06000000000006px" width="13" height="13"><path d="M6.5 1.5 V7 L2 11 M6.5 7 L11 11" stroke="#5a3000" stroke-width="2.6" fill="none" stroke-linecap="round"/><path d="M6.5 1.5 V7 L2 11 M6.5 7 L11 11" stroke="#f0b050" stroke-width="1.5" fill="none" stroke-linecap="round"/></svg>
<div class="t" style="left:1349px;top:359.1600000000001px;color:#111">$$$DUMMY.Group118</div>
<svg style="position:absolute;left:1542.5px;top:360.56000000000006px" width="12" height="9"><path d="M0.8 4.5 Q6 -1 11.2 4.5 Q6 10 0.8 4.5Z" fill="#f4f4f4" stroke="#222" stroke-width="0.8"/><circle cx="6" cy="4.5" r="2" fill="#333"/></svg>
<svg style="position:absolute;left:1561px;top:358.56000000000006px" width="10" height="12"><path d="M1.5 1 L1.5 10 L4 7.5 L6 11 L7.5 10.2 L5.6 7 L8.8 7Z" fill="#f0f0f0" stroke="#1a1a1a" stroke-width="0.9"/></svg>
<svg style="position:absolute;left:1575px;top:358.56000000000006px" width="13" height="12"><rect x="0.8" y="2.5" width="11.2" height="8.5" rx="1" fill="#e8e8e8" stroke="#222" stroke-width="0.9"/><rect x="3" y="0.8" width="4" height="2" fill="#e8e8e8" stroke="#222" stroke-width="0.7"/><circle cx="6.5" cy="6.8" r="2.6" fill="#c85060" stroke="#222" stroke-width="0.8"/><circle cx="6.5" cy="6.8" r="1.2" fill="#eee"/></svg>
<div class="" style="left:1321px;top:382.23px;width:12px;height:1px;background:#555"></div>
<svg style="position:absolute;left:1334px;top:374.73px" width="13" height="13"><path d="M6.5 1.5 V7 L2 11 M6.5 7 L11 11" stroke="#5a3000" stroke-width="2.6" fill="none" stroke-linecap="round"/><path d="M6.5 1.5 V7 L2 11 M6.5 7 L11 11" stroke="#f0b050" stroke-width="1.5" fill="none" stroke-linecap="round"/></svg>
<div class="t" style="left:1349px;top:375.83000000000004px;color:#111">$$$DUMMY.Group119</div>
<svg style="position:absolute;left:1542.5px;top:377.23px" width="12" height="9"><path d="M0.8 4.5 Q6 -1 11.2 4.5 Q6 10 0.8 4.5Z" fill="#f4f4f4" stroke="#222" stroke-width="0.8"/><circle cx="6" cy="4.5" r="2" fill="#333"/></svg>
<svg style="position:absolute;left:1561px;top:375.23px" width="10" height="12"><path d="M1.5 1 L1.5 10 L4 7.5 L6 11 L7.5 10.2 L5.6 7 L8.8 7Z" fill="#f0f0f0" stroke="#1a1a1a" stroke-width="0.9"/></svg>
<svg style="position:absolute;left:1575px;top:375.23px" width="13" height="12"><rect x="0.8" y="2.5" width="11.2" height="8.5" rx="1" fill="#e8e8e8" stroke="#222" stroke-width="0.9"/><rect x="3" y="0.8" width="4" height="2" fill="#e8e8e8" stroke="#222" stroke-width="0.7"/><circle cx="6.5" cy="6.8" r="2.6" fill="#c85060" stroke="#222" stroke-width="0.8"/><circle cx="6.5" cy="6.8" r="1.2" fill="#eee"/></svg>
<div class="" style="left:1321px;top:398.90000000000003px;width:12px;height:1px;background:#555"></div>
<svg style="position:absolute;left:1334px;top:391.40000000000003px" width="13" height="13"><path d="M6.5 1.5 V7 L2 11 M6.5 7 L11 11" stroke="#5a3000" stroke-width="2.6" fill="none" stroke-linecap="round"/><path d="M6.5 1.5 V7 L2 11 M6.5 7 L11 11" stroke="#f0b050" stroke-width="1.5" fill="none" stroke-linecap="round"/></svg>
<div class="t" style="left:1349px;top:392.50000000000006px;color:#111">$$$DUMMY.Group120</div>
<svg style="position:absolute;left:1542.5px;top:393.90000000000003px" width="12" height="9"><path d="M0.8 4.5 Q6 -1 11.2 4.5 Q6 10 0.8 4.5Z" fill="#f4f4f4" stroke="#222" stroke-width="0.8"/><circle cx="6" cy="4.5" r="2" fill="#333"/></svg>
<svg style="position:absolute;left:1561px;top:391.90000000000003px" width="10" height="12"><path d="M1.5 1 L1.5 10 L4 7.5 L6 11 L7.5 10.2 L5.6 7 L8.8 7Z" fill="#f0f0f0" stroke="#1a1a1a" stroke-width="0.9"/></svg>
<svg style="position:absolute;left:1575px;top:391.90000000000003px" width="13" height="12"><rect x="0.8" y="2.5" width="11.2" height="8.5" rx="1" fill="#e8e8e8" stroke="#222" stroke-width="0.9"/><rect x="3" y="0.8" width="4" height="2" fill="#e8e8e8" stroke="#222" stroke-width="0.7"/><circle cx="6.5" cy="6.8" r="2.6" fill="#c85060" stroke="#222" stroke-width="0.8"/><circle cx="6.5" cy="6.8" r="1.2" fill="#eee"/></svg>
<div class="" style="left:1321px;top:415.57000000000005px;width:12px;height:1px;background:#555"></div>
<svg style="position:absolute;left:1334px;top:408.07000000000005px" width="13" height="13"><path d="M6.5 1.5 V7 L2 11 M6.5 7 L11 11" stroke="#5a3000" stroke-width="2.6" fill="none" stroke-linecap="round"/><path d="M6.5 1.5 V7 L2 11 M6.5 7 L11 11" stroke="#f0b050" stroke-width="1.5" fill="none" stroke-linecap="round"/></svg>
<div class="t" style="left:1349px;top:409.1700000000001px;color:#111">$$$DUMMY.Group121</div>
<svg style="position:absolute;left:1542.5px;top:410.57000000000005px" width="12" height="9"><path d="M0.8 4.5 Q6 -1 11.2 4.5 Q6 10 0.8 4.5Z" fill="#f4f4f4" stroke="#222" stroke-width="0.8"/><circle cx="6" cy="4.5" r="2" fill="#333"/></svg>
<svg style="position:absolute;left:1561px;top:408.57000000000005px" width="10" height="12"><path d="M1.5 1 L1.5 10 L4 7.5 L6 11 L7.5 10.2 L5.6 7 L8.8 7Z" fill="#f0f0f0" stroke="#1a1a1a" stroke-width="0.9"/></svg>
<svg style="position:absolute;left:1575px;top:408.57000000000005px" width="13" height="12"><rect x="0.8" y="2.5" width="11.2" height="8.5" rx="1" fill="#e8e8e8" stroke="#222" stroke-width="0.9"/><rect x="3" y="0.8" width="4" height="2" fill="#e8e8e8" stroke="#222" stroke-width="0.7"/><circle cx="6.5" cy="6.8" r="2.6" fill="#c85060" stroke="#222" stroke-width="0.8"/><circle cx="6.5" cy="6.8" r="1.2" fill="#eee"/></svg>
<div class="" style="left:1321px;top:432.24px;width:12px;height:1px;background:#555"></div>
<svg style="position:absolute;left:1334px;top:424.74px" width="13" height="13"><path d="M6.5 1.5 V7 L2 11 M6.5 7 L11 11" stroke="#5a3000" stroke-width="2.6" fill="none" stroke-linecap="round"/><path d="M6.5 1.5 V7 L2 11 M6.5 7 L11 11" stroke="#f0b050" stroke-width="1.5" fill="none" stroke-linecap="round"/></svg>
<div class="t" style="left:1349px;top:425.84000000000003px;color:#111">$$$DUMMY.Group122</div>
<svg style="position:absolute;left:1542.5px;top:427.24px" width="12" height="9"><path d="M0.8 4.5 Q6 -1 11.2 4.5 Q6 10 0.8 4.5Z" fill="#f4f4f4" stroke="#222" stroke-width="0.8"/><circle cx="6" cy="4.5" r="2" fill="#333"/></svg>
<svg style="position:absolute;left:1561px;top:425.24px" width="10" height="12"><path d="M1.5 1 L1.5 10 L4 7.5 L6 11 L7.5 10.2 L5.6 7 L8.8 7Z" fill="#f0f0f0" stroke="#1a1a1a" stroke-width="0.9"/></svg>
<svg style="position:absolute;left:1575px;top:425.24px" width="13" height="12"><rect x="0.8" y="2.5" width="11.2" height="8.5" rx="1" fill="#e8e8e8" stroke="#222" stroke-width="0.9"/><rect x="3" y="0.8" width="4" height="2" fill="#e8e8e8" stroke="#222" stroke-width="0.7"/><circle cx="6.5" cy="6.8" r="2.6" fill="#c85060" stroke="#222" stroke-width="0.8"/><circle cx="6.5" cy="6.8" r="1.2" fill="#eee"/></svg>
<div class="" style="left:1298px;top:42px;width:302px;height:20.5px;background:#727272"></div>
<div class="" style="left:1305.5px;top:45px;width:25px;height:16.5px;background:linear-gradient(#4a4a4a,#363636);border:1px solid #1a1a1a;border-radius:4px"></div>
<svg style="position:absolute;left:1308px;top:47px" width="14" height="13"><path d="M1.5 1.5 H6.5" stroke="#e8d890" stroke-width="1.3"/><path d="M3.5 2 V11" stroke="#aab" stroke-width="1"/><rect x="5.5" y="5.5" width="6" height="1.8" fill="#eee"/><rect x="5.5" y="9.5" width="6" height="1.8" fill="#eee"/></svg>
<svg style="position:absolute;left:1323px;top:47px" width="6" height="12"><path d="M0.5 5 L3 1 L5.5 5Z M0.5 7 L3 11 L5.5 7Z" fill="#bbb"/></svg>
<div class="t" style="left:1341px;top:48.8px;">View</div>
<div class="t" style="left:1379px;top:48.8px;">Search</div>
<div class="dd" style="left:1418.5px;top:45px;width:98.5px;height:16.5px;"></div>
<div class="t w" style="left:1424.5px;top:49.05px;">All Scenes</div>
<svg style="position:absolute;left:1507.0px;top:47.25px" width="6" height="12"><path d="M0.5 5 L3 1 L5.5 5Z M0.5 7 L3 11 L5.5 7Z" fill="#ddd"/></svg>
<div class="" style="left:1521px;top:45px;width:85px;height:16.5px;background:linear-gradient(#a8a8a8,#b8b8b8);border:1px solid #333;border-radius:4px 0 0 4px"></div>
<svg style="position:absolute;left:1524px;top:46px" width="14" height="14"><circle cx="8.5" cy="5.5" r="3.6" fill="#dde" stroke="#222" stroke-width="1"/><path d="M6 8 L2 12" stroke="#c06020" stroke-width="2.2"/></svg>
<div class="" style="left:1590.5px;top:66px;width:8px;height:372px;background:#6a6a6a;border-radius:4px"></div>
<div class="" style="left:1590.5px;top:68px;width:8px;height:370px;background:linear-gradient(90deg,#666,#848484 50%,#6a6a6a);border:1px solid #555;border-radius:4px"></div>
<div class="" style="left:1298px;top:441.5px;width:302px;height:2px;background:#1e1e1e"></div>
<div class="" style="left:1298px;top:443.5px;width:302px;height:383px;background:#747474"></div>
<div class="" style="left:1298px;top:443.5px;width:302px;height:22px;background:#727272"></div>
<div class="" style="left:1305.5px;top:446.5px;width:25px;height:16px;background:linear-gradient(#4a4a4a,#363636);border:1px solid #1a1a1a;border-radius:4px"></div>
<svg style="position:absolute;left:1308px;top:448.5px" width="14" height="13"><rect x="1" y="2" width="10" height="3.5" rx="1.5" fill="#eee"/><rect x="1" y="7.5" width="10" height="3.5" rx="1.5" fill="#eee"/><circle cx="8.5" cy="3.7" r="1.3" fill="#333"/><circle cx="3.5" cy="9.2" r="1.3" fill="#333"/></svg>
<svg style="position:absolute;left:1323px;top:448.5px" width="6" height="12"><path d="M0.5 5 L3 1 L5.5 5Z M0.5 7 L3 11 L5.5 7Z" fill="#bbb"/></svg>
<div class="" style="left:1337px;top:446.5px;width:199px;height:16px;background:linear-gradient(#4a4a4a,#363636);border:1px solid #1a1a1a;border-radius:4px"></div>
<div class="" style="left:1337px;top:446.5px;width:17px;height:16px;background:linear-gradient(#6b93d3,#4f78b9);border:1px solid #1a1a1a;border-radius:4px 0 0 4px"></div>
<div class="" style="left:1353.6px;top:447px;width:1px;height:15px;background:#252525"></div>
<div class="" style="left:1370.2px;top:447px;width:1px;height:15px;background:#252525"></div>
<div class="" style="left:1386.8px;top:447px;width:1px;height:15px;background:#252525"></div>
<div class="" style="left:1403.4px;top:447px;width:1px;height:15px;background:#252525"></div>
<div class="" style="left:1420.0px;top:447px;width:1px;height:15px;background:#252525"></div>
<div class="" style="left:1436.6px;top:447px;width:1px;height:15px;background:#252525"></div>
<div class="" style="left:1453.2px;top:447px;width:1px;height:15px;background:#252525"></div>
<div class="" style="left:1469.8px;top:447px;width:1px;height:15px;background:#252525"></div>
<div class="" style="left:1486.4px;top:447px;width:1px;height:15px;background:#252525"></div>
<div class="" style="left:1503.0px;top:447px;width:1px;height:15px;background:#252525"></div>
<div class="" style="left:1519.6px;top:447px;width:1px;height:15px;background:#252525"></div>
<svg style="position:absolute;left:1339.5px;top:448px" width="13" height="13"><rect x="1" y="3.5" width="11" height="8" rx="1" fill="#eee" stroke="#222" stroke-width="0.8"/><rect x="2" y="1.5" width="4" height="2.5" fill="#c33"/><circle cx="6.5" cy="7.5" r="2.6" fill="#333"/><circle cx="6.5" cy="7.5" r="1.3" fill="#d55"/></svg>
<svg style="position:absolute;left:1356.1px;top:448px" width="13" height="13"><rect x="3.5" y="3.5" width="8" height="8" fill="#bbb" stroke="#333" stroke-width="0.6"/><rect x="1" y="1" width="8" height="8" fill="#dde" stroke="#333" stroke-width="0.6"/><path d="M3 7 L5 3 L7 6" stroke="#46c" stroke-width="1.2" fill="none"/></svg>
<svg style="position:absolute;left:1372.7px;top:448px" width="13" height="13"><circle cx="3" cy="2.5" r="2" fill="#cdbd50" opacity="0.7"/><rect x="7" y="3" width="4" height="6" fill="#5a7ac0"/><circle cx="5" cy="9" r="2.6" fill="#ddd"/></svg>
<svg style="position:absolute;left:1389.3px;top:448px" width="13" height="13"><circle cx="6.5" cy="6.5" r="5" fill="#5a82b8"/><path d="M3 4 Q5 3 6 5 Q5 8 3 7Z M7 7 Q9 6 10 8 Q8 10 7 9Z" fill="#6a9a5a"/></svg>
<svg style="position:absolute;left:1405.9px;top:448px" width="13" height="13"><path d="M6.5 1 L12 3.5 L12 9.5 L6.5 12 L1 9.5 L1 3.5Z" fill="#c8904a" stroke="#3a2a10" stroke-width="0.6"/><path d="M1 3.5 L6.5 6 L12 3.5 M6.5 6 V12" stroke="#f0c080" stroke-width="0.7" fill="none"/></svg>
<svg style="position:absolute;left:1422.5px;top:448px" width="13" height="13"><path d="M2 9 L5 6 M6 11 L9 8 M4 4 L8 0 M7 7 L11 3" stroke="#ccc" stroke-width="1.4" fill="none"/><rect x="1.5" y="5" width="5" height="6" rx="2.5" transform="rotate(45 4 8)" fill="none" stroke="#ddd" stroke-width="1.3"/><rect x="6.5" y="1" width="5" height="6" rx="2.5" transform="rotate(45 9 4)" fill="none" stroke="#ddd" stroke-width="1.3"/></svg>
<svg style="position:absolute;left:1439.1px;top:448px" width="13" height="13"><path d="M2 11 L8 5" stroke="#7a9ad8" stroke-width="2.2"/><circle cx="9" cy="4" r="2.8" fill="none" stroke="#7a9ad8" stroke-width="1.8"/></svg>
<svg style="position:absolute;left:1455.7px;top:448px" width="13" height="13"><path d="M1.5 2 L11.5 2 L6.5 11.5 Z" fill="none" stroke="#ddd" stroke-width="0.9"/><circle cx="1.5" cy="2" r="1.2" fill="#111"/><circle cx="11.5" cy="2" r="1.2" fill="#111"/><circle cx="6.5" cy="11.5" r="1.2" fill="#111"/></svg>
<svg style="position:absolute;left:1472.3px;top:448px" width="13" height="13"><circle cx="6.5" cy="6.5" r="5" fill="#a88"/><path d="M6.5 1.5 A5 5 0 0 0 6.5 11.5Z" fill="#ccc"/></svg>
<svg style="position:absolute;left:1488.9px;top:448px" width="13" height="13"><rect x="1.5" y="1.5" width="10" height="10" fill="#eee"/><path d="M1.5 1.5h2.5v2.5h-2.5z M6.5 1.5h2.5v2.5h-2.5z M4 4h2.5v2.5h-2.5z M9 4h2.5v2.5h-2.5z M1.5 6.5h2.5v2.5h-2.5z M6.5 6.5h2.5v2.5h-2.5z M4 9h2.5v2.5h-2.5z M9 9h2.5v2.5h-2.5z" fill="#a33"/></svg>
<svg style="position:absolute;left:1505.5px;top:448px" width="13" height="13"><path d="M3 1 V6 M0.5 3.5 H5.5 M9 5 V12 M5.5 8.5 H12.5 M10 0.5 V4 M8.2 2.2 H11.8" stroke="#e8d890" stroke-width="1"/></svg>
<svg style="position:absolute;left:1522.1px;top:448px" width="13" height="13"><path d="M1.5 6 L5 10.5 L9 4" stroke="#6a8ac8" stroke-width="2" fill="none"/><circle cx="9.5" cy="3.5" r="2.5" fill="#ddd"/></svg>
<div class="chk" style="left:1308px;top:473.5px;width:12px;height:12px;"><svg width="12" height="12" style="position:absolute;left:0;top:-2px"><path d="M2.5 6 L5 9 L10.5 1.5" stroke="#eee" stroke-width="1.8" fill="none"/></svg></div>
<div class="t" style="left:1325px;top:474.8px;color:#fff">Overwrite</div>
<div class="chk" style="left:1450px;top:473.5px;width:12px;height:12px;"><svg width="12" height="12" style="position:absolute;left:0;top:-2px"><path d="M2.5 6 L5 9 L10.5 1.5" stroke="#eee" stroke-width="1.8" fill="none"/></svg></div>
<div class="t" style="left:1467px;top:474.8px;color:#fff">File Extensions</div>
<div class="chk" style="left:1308px;top:491.5px;width:12px;height:12px;"></div>
<div class="t" style="left:1325px;top:492.8px;">Placeholders</div>
<div class="chk" style="left:1450px;top:491.5px;width:12px;height:12px;"></div>
<div class="t" style="left:1467px;top:492.8px;">Cache Result</div>
<div class="dd" style="left:1305px;top:510px;width:136px;height:16.5px;"></div>
<div class="t w" style="left:1311px;top:514.05px;"></div>
<svg style="position:absolute;left:1431px;top:512.25px" width="6" height="12"><path d="M0.5 5 L3 1 L5.5 5Z M0.5 7 L3 11 L5.5 7Z" fill="#ddd"/></svg>
<svg style="position:absolute;left:1308px;top:512px" width="11" height="13"><rect x="1" y="0.5" width="9" height="12" fill="#eee"/><rect x="2" y="6" width="7" height="5" fill="#c05070"/><rect x="2" y="2" width="5" height="3" fill="#7080c0"/></svg>
<div class="t w" style="left:1323px;top:513.8px;">PNG</div>
<div class="" style="left:1448px;top:510px;width:135px;height:16.5px;background:linear-gradient(#4a4a4a,#383838);border:1px solid #151515;border-radius:4px"></div>
<div class="" style="left:1537.5px;top:510px;width:45.5px;height:16.5px;background:linear-gradient(#6b93d3,#4f78b9);border:1px solid #151515;border-radius:0 4px 4px 0"></div>
<div class="" style="left:1492px;top:510.5px;width:1px;height:15.5px;background:#222"></div>
<div class="t w" style="left:1370px;width:200px;text-align:center;top:513.8px;">BW</div>
<div class="t w" style="left:1414.5px;width:200px;text-align:center;top:513.8px;">RGB</div>
<div class="t" style="left:1460px;width:200px;text-align:center;top:513.8px;">RGBA</div>
<div class="t" style="left:1311px;top:532.3px;">Color Depth:</div>
<div class="" style="left:1401px;top:528.8px;width:182px;height:16px;background:linear-gradient(#4a4a4a,#383838);border:1px solid #151515;border-radius:4px"></div>
<div class="" style="left:1401px;top:528.8px;width:91px;height:16px;background:linear-gradient(#6b93d3,#4f78b9);border:1px solid #151515;border-radius:4px 0 0 4px"></div>
<div class="t" style="left:1346px;width:200px;text-align:center;top:532.8px;">8</div>
<div class="t w" style="left:1437.5px;width:200px;text-align:center;top:532.8px;">16</div>
<div class="" style="left:1305px;top:546.8px;width:278px;height:16px;background:linear-gradient(#a6a6a6,#b9b9b9);border:1px solid #333;border-radius:8px"></div>
<div class="" style="left:1305.5px;top:547.3px;width:46.5px;height:15px;background:linear-gradient(#6c6c6c,#808080);border-radius:8px 0 0 8px"></div>
<div class="t" style="left:1316px;top:551.3px;">Compression:</div>
<div class="t" style="right:28px;top:551.3px;">15%</div>
<div class="sep" style="left:1301px;top:570.5px;width:285px;height:2px;"></div>
<div class="trir" style="left:1310px;top:577.5px;width:0px;height:0px;"></div>
<div class="chk" style="left:1321px;top:575.5px;width:12px;height:12px;"></div>
<div class="t hdr" style="left:1336px;top:576.3px;">Freestyle</div>
<div class="grip" style="left:1576px;top:579.0px;width:9px;height:5px;"></div>
<div class="sep" style="left:1301px;top:591px;width:285px;height:2px;"></div>
<div class="tri" style="left:1309px;top:598.5px;width:0px;height:0px;"></div>
<div class="t hdr" style="left:1320px;top:596.8px;">Sampling</div>
<div class="grip" style="left:1576px;top:599.5px;width:9px;height:5px;"></div>
<div class="dd" style="left:1305px;top:619px;width:244px;height:16.5px;"></div>
<div class="t w" style="left:1311px;top:623.05px;">Sampling Presets</div>
<svg style="position:absolute;left:1539px;top:621.25px" width="6" height="12"><path d="M0.5 5 L3 1 L5.5 5Z M0.5 7 L3 11 L5.5 7Z" fill="#ddd"/></svg>
<div class="" style="left:1549px;top:619px;width:17px;height:16.5px;background:linear-gradient(#a8a8a8,#909090);border:1px solid #222"></div>
<div class="" style="left:1566px;top:619px;width:17px;height:16.5px;background:linear-gradient(#a8a8a8,#909090);border:1px solid #222;border-radius:0 4px 4px 0"></div>
<svg style="position:absolute;left:1551px;top:621px" width="30" height="12"><path d="M6 1.5V10.5M1.5 6H10.5" stroke="#fff" stroke-width="1.6"/><path d="M19.5 6H27.5" stroke="#fff" stroke-width="1.6"/></svg>
<div class="dd" style="left:1305px;top:640px;width:135px;height:16.5px;"></div>
<div class="t w" style="left:1311px;top:644.05px;">Path Tracing</div>
<svg style="position:absolute;left:1430px;top:642.25px" width="6" height="12"><path d="M0.5 5 L3 1 L5.5 5Z M0.5 7 L3 11 L5.5 7Z" fill="#ddd"/></svg>
<div class="chk" style="left:1450px;top:642.5px;width:12px;height:12px;"></div>
<div class="t" style="left:1467px;top:643.8px;">Square Samples</div>
<div class="t" style="left:1311px;top:663.8px;">Settings:</div>
<div class="t" style="left:1452px;top:663.8px;">Samples:</div>
<div class="num" style="left:1305px;top:677px;width:135px;height:49.5px;border-radius:7px"></div>
<svg style="position:absolute;left:1310px;top:681.25px" width="5" height="8"><path d="M4 0.5 L0.8 4 L4 7.5Z" fill="#6d6d6d"/></svg>
<svg style="position:absolute;left:1430px;top:681.25px" width="5" height="8"><path d="M1 0.5 L4.2 4 L1 7.5Z" fill="#6d6d6d"/></svg>
<div class="t" style="left:1318px;top:680.75px;">Seed:</div>
<div class="t" style="right:173px;top:680.75px;">0</div>
<div class="" style="left:1305.5px;top:693.0px;width:134px;height:1px;background:#3a3a3a"></div>
<svg style="position:absolute;left:1310px;top:697.75px" width="5" height="8"><path d="M4 0.5 L0.8 4 L4 7.5Z" fill="#6d6d6d"/></svg>
<svg style="position:absolute;left:1430px;top:697.75px" width="5" height="8"><path d="M1 0.5 L4.2 4 L1 7.5Z" fill="#6d6d6d"/></svg>
<div class="t" style="left:1318px;top:697.25px;">Clamp Direct:</div>
<div class="t" style="right:173px;top:697.25px;">0.00</div>
<div class="" style="left:1305.5px;top:709.5px;width:134px;height:1px;background:#3a3a3a"></div>
<svg style="position:absolute;left:1310px;top:714.25px" width="5" height="8"><path d="M4 0.5 L0.8 4 L4 7.5Z" fill="#6d6d6d"/></svg>
<svg style="position:absolute;left:1430px;top:714.25px" width="5" height="8"><path d="M1 0.5 L4.2 4 L1 7.5Z" fill="#6d6d6d"/></svg>
<div class="t" style="left:1318px;top:713.75px;">Clamp Indirect:</div>
<div class="t" style="right:173px;top:713.75px;">0.00</div>
<div class="" style="left:1422px;top:677.5px;width:17.5px;height:16px;background:linear-gradient(#a8a8a8,#9a9a9a);border-left:1px solid #333;border-radius:0 7px 0 0"></div>
<svg style="position:absolute;left:1424px;top:679px" width="12" height="12"><circle cx="6" cy="6" r="5" fill="#f4f4f4" stroke="#222" stroke-width="1"/><path d="M6 6 L4 9" stroke="#d03030" stroke-width="1.2"/></svg>
<div class="t" style="right:190px;top:680.8px;">0</div>
<div class="num" style="left:1448px;top:677px;width:135px;height:33.0px;border-radius:7px"></div>
<svg style="position:absolute;left:1453px;top:681.25px" width="5" height="8"><path d="M4 0.5 L0.8 4 L4 7.5Z" fill="#6d6d6d"/></svg>
<svg style="position:absolute;left:1573px;top:681.25px" width="5" height="8"><path d="M1 0.5 L4.2 4 L1 7.5Z" fill="#6d6d6d"/></svg>
<div class="t" style="left:1461px;top:680.75px;">Render:</div>
<div class="t" style="right:30px;top:680.75px;">128</div>
<div class="" style="left:1448.5px;top:693.0px;width:134px;height:1px;background:#3a3a3a"></div>
<svg style="position:absolute;left:1453px;top:697.75px" width="5" height="8"><path d="M4 0.5 L0.8 4 L4 7.5Z" fill="#6d6d6d"/></svg>
<svg style="position:absolute;left:1573px;top:697.75px" width="5" height="8"><path d="M1 0.5 L4.2 4 L1 7.5Z" fill="#6d6d6d"/></svg>
<div class="t" style="left:1461px;top:697.25px;">Preview:</div>
<div class="t" style="right:30px;top:697.25px;">100</div>
<div class="t" style="left:1311px;top:735.3px;">Pattern:</div>
<div class="dd" style="left:1400px;top:731.5px;width:183px;height:16.5px;"></div>
<div class="t w" style="left:1406px;top:735.55px;">Sobol</div>
<svg style="position:absolute;left:1573px;top:733.75px" width="6" height="12"><path d="M0.5 5 L3 1 L5.5 5Z M0.5 7 L3 11 L5.5 7Z" fill="#ddd"/></svg>
<div class="sep" style="left:1301px;top:752.5px;width:285px;height:2px;"></div>
<div class="trir" style="left:1310px;top:760px;width:0px;height:0px;"></div>
<div class="t hdr" style="left:1320px;top:758.8px;">Volume Sampling</div>
<div class="grip" style="left:1576px;top:761.5px;width:9px;height:5px;"></div>
<div class="sep" style="left:1301px;top:773.5px;width:285px;height:2px;"></div>
<div class="trir" style="left:1310px;top:780px;width:0px;height:0px;"></div>
<div class="t hdr" style="left:1320px;top:778.8px;">Light Paths</div>
<div class="grip" style="left:1576px;top:781.5px;width:9px;height:5px;"></div>
<div class="sep" style="left:1301px;top:793.5px;width:285px;height:2px;"></div>
<div class="trir" style="left:1310px;top:800px;width:0px;height:0px;"></div>
<div class="chk" style="left:1321px;top:798px;width:12px;height:12px;"></div>
<div class="t hdr" style="left:1336px;top:798.8px;">Motion Blur</div>
<div class="grip" style="left:1576px;top:801.5px;width:9px;height:5px;"></div>
<div class="sep" style="left:1301px;top:813.5px;width:285px;height:2px;"></div>
<div class="tri" style="left:1309px;top:819.5px;width:0px;height:0px;"></div>
<div class="t hdr" style="left:1320px;top:817.8px;">Film</div>
<div class="grip" style="left:1576px;top:820.5px;width:9px;height:5px;"></div>
<div class="" style="left:1589.5px;top:470px;width:9px;height:344px;background:#646464;border:1px solid #575757;border-radius:5px"></div>
<div class="" style="left:1589.5px;top:627px;width:9px;height:135px;background:linear-gradient(90deg,#6c6c6c,#8c8c8c 50%,#707070);border:1px solid #555;border-radius:5px"></div>
<div class="" style="left:1298px;top:823.5px;width:302px;height:3px;background:#e8e8e8"></div>
<div class="" style="left:2px;top:738.5px;width:1295px;height:22px;background:#727272;border-bottom:1.5px solid #151515"></div>
<div class="" style="left:9.4px;top:741.3px;width:24.4px;height:15.5px;background:linear-gradient(#4a4a4a,#363636);border:1px solid #1a1a1a;border-radius:4px"></div>
<svg style="position:absolute;left:12px;top:743px" width="12" height="12"><path d="M6 0.8 L11 3 L11 8.8 L6 11.2 L1 8.8 L1 3Z" fill="#e4e4e4" stroke="#222" stroke-width="0.7"/><path d="M1 3 L6 5.3 L11 3 M6 5.3 V11" stroke="#888" stroke-width="0.8" fill="none"/><path d="M6 5.3 L11 3 L11 8.8 L6 11.2Z" fill="#9a9a9a"/></svg>
<svg style="position:absolute;left:26px;top:743px" width="6" height="12"><path d="M0.5 5 L3 1 L5.5 5Z M0.5 7 L3 11 L5.5 7Z" fill="#bbb"/></svg>
<div class="t" style="left:44px;top:745.3px;">View</div>
<div class="t" style="left:82px;top:745.3px;">Select</div>
<div class="t" style="left:124.5px;top:745.3px;">Add</div>
<div class="t" style="left:157.5px;top:745.3px;">Object</div>
<div class="dd" style="left:195px;top:741.3px;width:94.5px;height:16px;"></div>
<div class="t w" style="left:201px;top:745.0999999999999px;"></div>
<svg style="position:absolute;left:279.5px;top:743.3px" width="6" height="12"><path d="M0.5 5 L3 1 L5.5 5Z M0.5 7 L3 11 L5.5 7Z" fill="#ddd"/></svg>
<svg style="position:absolute;left:199px;top:743px" width="12" height="12"><path d="M6 0.8 L11 3 L11 8.8 L6 11.2 L1 8.8 L1 3Z" fill="#e8a040" stroke="#5a3000" stroke-width="0.7"/><path d="M1 3 L6 5.3 L11 3 M6 5.3 V11" stroke="#ffd090" stroke-width="0.8" fill="none"/></svg>
<div class="t w" style="left:215.5px;top:745.3px;">Object Mode</div>
<div class="dd" style="left:294px;top:741.3px;width:29px;height:16px;"></div>
<div class="t w" style="left:300px;top:745.0999999999999px;"></div>
<svg style="position:absolute;left:313px;top:743.3px" width="6" height="12"><path d="M0.5 5 L3 1 L5.5 5Z M0.5 7 L3 11 L5.5 7Z" fill="#ddd"/></svg>
<svg style="position:absolute;left:298px;top:743px" width="12" height="12"><defs><radialGradient id="sph" cx="0.35" cy="0.35" r="0.7"><stop offset="0" stop-color="#fff"/><stop offset="0.5" stop-color="#d08080"/><stop offset="1" stop-color="#704040"/></radialGradient></defs><circle cx="6" cy="6" r="5.2" fill="url(#sph)"/></svg>
<div class="" style="left:327.8px;top:741.3px;width:28.5px;height:16px;background:linear-gradient(#4a4a4a,#363636);border:1px solid #1a1a1a;border-radius:4px 0 0 4px"></div>
<svg style="position:absolute;left:331px;top:743px" width="12" height="12"><circle cx="4" cy="4" r="3.3" fill="#f0f0f0" stroke="#333" stroke-width="0.6"/><circle cx="8" cy="8" r="3.3" fill="#f0f0f0" stroke="#333" stroke-width="0.6"/><circle cx="5.5" cy="6" r="1.5" fill="#4070c0"/></svg>
<svg style="position:absolute;left:347px;top:743px" width="6" height="12"><path d="M0.5 5 L3 1 L5.5 5Z M0.5 7 L3 11 L5.5 7Z" fill="#bbb"/></svg>
<div class="" style="left:356px;top:741.3px;width:16px;height:16px;background:linear-gradient(#a4a4a4,#8e8e8e);border:1px solid #2a2a2a;border-radius:0 4px 4px 0"></div>
<svg style="position:absolute;left:357px;top:743px" width="14" height="12"><circle cx="3" cy="2" r="1.3" fill="none" stroke="#336" stroke-width="0.8"/><circle cx="7" cy="2" r="1.3" fill="none" stroke="#336" stroke-width="0.8"/><circle cx="11" cy="2" r="1.3" fill="none" stroke="#336" stroke-width="0.8"/><path d="M1.5 7.5 H12.5 M1.5 7.5 L3.5 5.5 M1.5 7.5 L3.5 9.5 M12.5 7.5 L10.5 5.5 M12.5 7.5 L10.5 9.5" stroke="#fff" stroke-width="1.1" fill="none"/></svg>
<div class="" style="left:377.5px;top:741.3px;width:126px;height:16px;background:linear-gradient(#4a4a4a,#363636);border:1px solid #1a1a1a;border-radius:4px"></div>
<div class="" style="left:393.6px;top:741.8px;width:16.4px;height:15px;background:linear-gradient(#6b93d3,#4f78b9)"></div>
<div class="" style="left:393.6px;top:741.8px;width:1px;height:15px;background:#1c1c1c"></div>
<div class="" style="left:410px;top:741.8px;width:1px;height:15px;background:#1c1c1c"></div>
<div class="" style="left:426px;top:741.8px;width:1px;height:15px;background:#1c1c1c"></div>
<div class="" style="left:443px;top:741.8px;width:1px;height:15px;background:#1c1c1c"></div>
<svg style="position:absolute;left:379px;top:742px" width="14" height="14"><path d="M7 8 V1.5" stroke="#5070e0" stroke-width="1.3"/><path d="M7 8 L1.5 11.5" stroke="#e03030" stroke-width="1.3"/><path d="M7 8 L12.5 11.5" stroke="#30c030" stroke-width="1.3"/></svg>
<svg style="position:absolute;left:396px;top:743px" width="12" height="12"><path d="M1.5 10.5 L10 2" stroke="#111" stroke-width="2.2"/><path d="M1.5 10.5 L10 2" stroke="#cfe0ff" stroke-width="1"/><path d="M5.5 2 H10 V6.5" stroke="#cfe0ff" stroke-width="1.2" fill="none"/></svg>
<svg style="position:absolute;left:412px;top:743px" width="12" height="12"><path d="M1.5 11 Q2 3 10.5 1.5" stroke="#5a7ab8" stroke-width="1.6" fill="none"/></svg>
<svg style="position:absolute;left:429px;top:743px" width="12" height="12"><path d="M1.5 10.5 L7 5" stroke="#5a7ab8" stroke-width="1.6"/><rect x="6" y="1" width="5" height="5" fill="#5a7ab8"/></svg>
<div class="t w" style="left:449px;top:745.3px;">Global</div>
<svg style="position:absolute;left:495px;top:743px" width="6" height="12"><path d="M0.5 5 L3 1 L5.5 5Z M0.5 7 L3 11 L5.5 7Z" fill="#ddd"/></svg>
<div class="" style="left:507.8px;top:741.3px;width:41.5px;height:16px;background:#8f8f8f;border:1px solid #555;border-radius:4px"></div>
<div class="" style="left:516.1px;top:741.8px;width:1px;height:15px;background:#6c6c6c"></div>
<div class="" style="left:524.4px;top:741.8px;width:1px;height:15px;background:#6c6c6c"></div>
<div class="" style="left:532.7px;top:741.8px;width:1px;height:15px;background:#6c6c6c"></div>
<div class="" style="left:541.0px;top:741.8px;width:1px;height:15px;background:#6c6c6c"></div>
<div class="" style="left:507.8px;top:749.2px;width:41.5px;height:1px;background:#6c6c6c"></div>
<div class="" style="left:554px;top:741.3px;width:41.5px;height:16px;background:#8f8f8f;border:1px solid #555;border-radius:4px"></div>
<div class="" style="left:562.3px;top:741.8px;width:1px;height:15px;background:#6c6c6c"></div>
<div class="" style="left:570.6px;top:741.8px;width:1px;height:15px;background:#6c6c6c"></div>
<div class="" style="left:578.9px;top:741.8px;width:1px;height:15px;background:#6c6c6c"></div>
<div class="" style="left:587.2px;top:741.8px;width:1px;height:15px;background:#6c6c6c"></div>
<div class="" style="left:554px;top:749.2px;width:41.5px;height:1px;background:#6c6c6c"></div>
<div class="" style="left:510px;top:743px;width:5px;height:5px;border-radius:50%;background:#9a9a9a;border:1px solid #666"></div>
<div class="" style="left:518.5px;top:743px;width:5px;height:5px;border-radius:50%;background:#f0a040"></div>
<div class="" style="left:600.3px;top:741.3px;width:16.3px;height:16px;background:linear-gradient(#a4a4a4,#8e8e8e);border:1px solid #2a2a2a;border-radius:4px"></div>
<svg style="position:absolute;left:602px;top:743px" width="12" height="12"><rect x="1" y="1" width="6" height="10" fill="#ddd" stroke="#333" stroke-width="0.6"/><path d="M8 4 a2 2 0 0 1 3 0 v2 M8 7 a2 2 0 0 0 3 0 v2 a2 2 0 0 1 -3 0" stroke="#111" stroke-width="1" fill="none"/></svg>
<div class="" style="left:621.6px;top:741.3px;width:15.6px;height:16px;background:linear-gradient(#a4a4a4,#8e8e8e);border:1px solid #2a2a2a;border-radius:4px"></div>
<svg style="position:absolute;left:623px;top:743px" width="12" height="12"><circle cx="6" cy="6" r="4.6" fill="none" stroke="#777" stroke-width="1"/><circle cx="6" cy="6" r="2.5" fill="none" stroke="#777" stroke-width="1"/></svg>
<div class="" style="left:642.8px;top:741.3px;width:15.6px;height:16px;background:linear-gradient(#a4a4a4,#8e8e8e);border:1px solid #2a2a2a;border-radius:4px 0 0 4px"></div>
<svg style="position:absolute;left:644px;top:743px" width="12" height="12"><path d="M2 7 A4 4 0 0 0 9 9 L11 5 M2 7 L4.5 3 M9 9" stroke="#777" stroke-width="2" fill="none"/></svg>
<div class="" style="left:658.4px;top:741.3px;width:29.4px;height:16px;background:linear-gradient(#4a4a4a,#363636);border:1px solid #1a1a1a;border-radius:0"></div>
<svg style="position:absolute;left:662px;top:743px" width="12" height="12"><path d="M6 1 L11 3.2 L11 8.8 L6 11 L1 8.8 L1 3.2Z" fill="#eee"/><path d="M6 5.4 L11 3.2 L11 8.8 L6 11Z" fill="#888"/></svg>
<svg style="position:absolute;left:676px;top:743px" width="6" height="12"><path d="M0.5 5 L3 1 L5.5 5Z M0.5 7 L3 11 L5.5 7Z" fill="#ddd"/></svg>
<div class="" style="left:687.8px;top:741.3px;width:58.7px;height:16px;background:linear-gradient(#4a4a4a,#363636);border:1px solid #1a1a1a"></div>
<div class="t w" style="left:694px;top:745.3px;">Closest</div>
<svg style="position:absolute;left:737px;top:743px" width="6" height="12"><path d="M0.5 5 L3 1 L5.5 5Z M0.5 7 L3 11 L5.5 7Z" fill="#ddd"/></svg>
<div class="" style="left:746.5px;top:741.3px;width:33.2px;height:16px;background:linear-gradient(#4a4a4a,#363636);border:1px solid #1a1a1a;border-radius:0 4px 4px 0"></div>
<div class="" style="left:763px;top:741.8px;width:1px;height:15px;background:#222"></div>
<svg style="position:absolute;left:748px;top:743px" width="30" height="12"><circle cx="5" cy="8" r="3.5" fill="#ddd"/><path d="M5 8 L11 1.5" stroke="#7090e0" stroke-width="1.8"/><circle cx="22" cy="6" r="4.5" fill="#bbb"/><circle cx="24" cy="8" r="2.5" fill="none" stroke="#4060d0" stroke-width="1" stroke-dasharray="1 1"/></svg>
<div class="" style="left:784.4px;top:741.3px;width:32.8px;height:16px;background:linear-gradient(#a4a4a4,#8e8e8e);border:1px solid #2a2a2a;border-radius:4px"></div>
<div class="" style="left:800.8px;top:741.8px;width:1px;height:15px;background:#333"></div>
<svg style="position:absolute;left:786px;top:743px" width="30" height="12"><rect x="1" y="3" width="11" height="8" fill="#ddd" stroke="#222" stroke-width="0.8"/><circle cx="6.5" cy="7" r="2.2" fill="#333"/><path d="M10 1 L11 2 L12 1" stroke="#f0e060" stroke-width="1"/><rect x="18" y="4" width="11" height="7" fill="#333"/><path d="M18 2 L29 1 L29 3.5 L18 4.5Z" fill="#eee" stroke="#222" stroke-width="0.5"/></svg>
<div class="" style="left:822.8px;top:741.3px;width:16px;height:16px;background:linear-gradient(#a4a4a4,#8e8e8e);border:1px solid #2a2a2a;border-radius:4px"></div>
<svg style="position:absolute;left:825px;top:743px" width="12" height="12"><rect x="2" y="1" width="3" height="10" fill="none" stroke="#111" stroke-width="1"/><rect x="7" y="1" width="3" height="10" fill="none" stroke="#111" stroke-width="1"/></svg>
<div class="" style="left:843.5px;top:741.3px;width:84px;height:16px;background:linear-gradient(#a4a4a4,#8e8e8e);border:1px solid #2a2a2a;border-radius:4px"></div>
<svg style="position:absolute;left:847px;top:742px" width="14" height="14"><rect x="3" y="3" width="9" height="9" fill="#ddd" stroke="#222" stroke-width="0.7"/><rect x="1" y="1" width="9" height="9" fill="#eee" stroke="#222" stroke-width="0.7"/><rect x="3" y="3" width="4" height="4" fill="#6080c0"/></svg>
<div class="t" style="left:866px;top:745.3px;">RenderLayer</div>
<div class="" style="left:2px;top:761px;width:1295px;height:62.5px;background:#737373"></div>
<div class="" style="left:2px;top:761px;width:1295px;height:27.5px;background:#6e6e6e"></div>
<div class="" style="left:2px;top:761px;width:21px;height:27.5px;background:#585858"></div>
<div class="" style="left:46.2px;top:761px;width:1px;height:27.5px;background:#5f5f5f"></div>
<div class="" style="left:74.2px;top:761px;width:1px;height:27.5px;background:#5f5f5f"></div>
<div class="" style="left:102.1px;top:761px;width:1px;height:27.5px;background:#5f5f5f"></div>
<div class="" style="left:130.1px;top:761px;width:1px;height:27.5px;background:#5f5f5f"></div>
<div class="" style="left:158.1px;top:761px;width:1px;height:27.5px;background:#5f5f5f"></div>
<div class="" style="left:186.0px;top:761px;width:1px;height:27.5px;background:#5f5f5f"></div>
<div class="" style="left:214.0px;top:761px;width:1px;height:27.5px;background:#5f5f5f"></div>
<div class="" style="left:241.9px;top:761px;width:1px;height:27.5px;background:#5f5f5f"></div>
<div class="" style="left:269.8px;top:761px;width:1px;height:27.5px;background:#5f5f5f"></div>
<div class="" style="left:297.8px;top:761px;width:1px;height:27.5px;background:#5f5f5f"></div>
<div class="" style="left:325.8px;top:761px;width:1px;height:27.5px;background:#5f5f5f"></div>
<div class="" style="left:353.7px;top:761px;width:1px;height:27.5px;background:#5f5f5f"></div>
<div class="" style="left:381.6px;top:761px;width:1px;height:27.5px;background:#5f5f5f"></div>
<div class="" style="left:409.6px;top:761px;width:1px;height:27.5px;background:#5f5f5f"></div>
<div class="" style="left:437.6px;top:761px;width:1px;height:27.5px;background:#5f5f5f"></div>
<div class="" style="left:465.5px;top:761px;width:1px;height:27.5px;background:#5f5f5f"></div>
<div class="" style="left:493.4px;top:761px;width:1px;height:27.5px;background:#5f5f5f"></div>
<div class="" style="left:521.4px;top:761px;width:1px;height:27.5px;background:#5f5f5f"></div>
<div class="" style="left:549.3px;top:761px;width:1px;height:27.5px;background:#5f5f5f"></div>
<div class="" style="left:577.3px;top:761px;width:1px;height:27.5px;background:#5f5f5f"></div>
<div class="" style="left:605.2px;top:761px;width:1px;height:27.5px;background:#5f5f5f"></div>
<div class="" style="left:633.2px;top:761px;width:1px;height:27.5px;background:#5f5f5f"></div>
<div class="" style="left:661.1px;top:761px;width:1px;height:27.5px;background:#5f5f5f"></div>
<div class="" style="left:689.1px;top:761px;width:1px;height:27.5px;background:#5f5f5f"></div>
<div class="" style="left:717.0px;top:761px;width:1px;height:27.5px;background:#5f5f5f"></div>
<div class="" style="left:745.0px;top:761px;width:1px;height:27.5px;background:#5f5f5f"></div>
<div class="" style="left:772.9px;top:761px;width:1px;height:27.5px;background:#5f5f5f"></div>
<div class="" style="left:800.9px;top:761px;width:1px;height:27.5px;background:#5f5f5f"></div>
<div class="" style="left:828.8px;top:761px;width:1px;height:27.5px;background:#5f5f5f"></div>
<div class="" style="left:856.8px;top:761px;width:1px;height:27.5px;background:#5f5f5f"></div>
<div class="" style="left:884.7px;top:761px;width:1px;height:27.5px;background:#5f5f5f"></div>
<div class="" style="left:912.7px;top:761px;width:1px;height:27.5px;background:#5f5f5f"></div>
<div class="" style="left:940.6px;top:761px;width:1px;height:27.5px;background:#5f5f5f"></div>
<div class="" style="left:968.6px;top:761px;width:1px;height:27.5px;background:#5f5f5f"></div>
<div class="" style="left:996.5px;top:761px;width:1px;height:27.5px;background:#5f5f5f"></div>
<div class="" style="left:1024.5px;top:761px;width:1px;height:27.5px;background:#5f5f5f"></div>
<div class="" style="left:1052.4px;top:761px;width:1px;height:27.5px;background:#5f5f5f"></div>
<div class="" style="left:1080.4px;top:761px;width:1px;height:27.5px;background:#5f5f5f"></div>
<div class="" style="left:1108.3px;top:761px;width:1px;height:27.5px;background:#5f5f5f"></div>
<div class="" style="left:1136.3px;top:761px;width:1px;height:27.5px;background:#5f5f5f"></div>
<div class="" style="left:1164.2px;top:761px;width:1px;height:27.5px;background:#5f5f5f"></div>
<div class="" style="left:1192.2px;top:761px;width:1px;height:27.5px;background:#5f5f5f"></div>
<div class="" style="left:1220.1px;top:761px;width:1px;height:27.5px;background:#5f5f5f"></div>
<div class="" style="left:1248.1px;top:761px;width:1px;height:27.5px;background:#5f5f5f"></div>
<div class="" style="left:1276.0px;top:761px;width:1px;height:27.5px;background:#5f5f5f"></div>
<div class="" style="left:16px;top:761px;width:2.5px;height:27.5px;background:#5ad34a"></div>
<div class="" style="left:5px;top:788.5px;width:1157px;height:10.5px;background:linear-gradient(#8a8a8a,#b0b0b0);border-radius:5px;border:1px solid #555"></div>
<div class="" style="left:1157px;top:788.5px;width:135.5px;height:10.5px;background:#5f5f5f;border-radius:5px"></div>
<div class="" style="left:1154.5px;top:789px;width:8.5px;height:9.5px;background:#707070;border-radius:50%;border:1px solid #555"></div>
<div class="" style="left:6px;top:789.5px;width:8px;height:8px;background:#666;border-radius:50%"></div>
<div class="t" style="left:-81.7px;width:200px;text-align:center;top:789.5999999999999px;font-size:10px;color:#111">0</div>
<div class="t" style="left:-25.799999999999997px;width:200px;text-align:center;top:789.5999999999999px;font-size:10px;color:#111">10</div>
<div class="t" style="left:30.099999999999994px;width:200px;text-align:center;top:789.5999999999999px;font-size:10px;color:#111">20</div>
<div class="t" style="left:86.0px;width:200px;text-align:center;top:789.5999999999999px;font-size:10px;color:#111">30</div>
<div class="t" style="left:141.9px;width:200px;text-align:center;top:789.5999999999999px;font-size:10px;color:#111">40</div>
<div class="t" style="left:197.8px;width:200px;text-align:center;top:789.5999999999999px;font-size:10px;color:#111">50</div>
<div class="t" style="left:253.7px;width:200px;text-align:center;top:789.5999999999999px;font-size:10px;color:#111">60</div>
<div class="t" style="left:309.6px;width:200px;text-align:center;top:789.5999999999999px;font-size:10px;color:#111">70</div>
<div class="t" style="left:365.5px;width:200px;text-align:center;top:789.5999999999999px;font-size:10px;color:#111">80</div>
<div class="t" style="left:421.4px;width:200px;text-align:center;top:789.5999999999999px;font-size:10px;color:#111">90</div>
<div class="t" style="left:477.29999999999995px;width:200px;text-align:center;top:789.5999999999999px;font-size:10px;color:#111">100</div>
<div class="t" style="left:533.1999999999999px;width:200px;text-align:center;top:789.5999999999999px;font-size:10px;color:#111">110</div>
<div class="t" style="left:589.0999999999999px;width:200px;text-align:center;top:789.5999999999999px;font-size:10px;color:#111">120</div>
<div class="t" style="left:644.9999999999999px;width:200px;text-align:center;top:789.5999999999999px;font-size:10px;color:#111">130</div>
<div class="t" style="left:700.9px;width:200px;text-align:center;top:789.5999999999999px;font-size:10px;color:#111">140</div>
<div class="t" style="left:756.8px;width:200px;text-align:center;top:789.5999999999999px;font-size:10px;color:#111">150</div>
<div class="t" style="left:812.6999999999999px;width:200px;text-align:center;top:789.5999999999999px;font-size:10px;color:#111">160</div>
<div class="t" style="left:868.5999999999999px;width:200px;text-align:center;top:789.5999999999999px;font-size:10px;color:#111">170</div>
<div class="t" style="left:924.5px;width:200px;text-align:center;top:789.5999999999999px;font-size:10px;color:#111">180</div>
<div class="t" style="left:980.3999999999999px;width:200px;text-align:center;top:789.5999999999999px;font-size:10px;color:#111">190</div>
<div class="t" style="left:1036.3px;width:200px;text-align:center;top:789.5999999999999px;font-size:10px;color:#111">200</div>
<div class="t" style="left:1092.1999999999998px;width:200px;text-align:center;top:789.5999999999999px;font-size:10px;color:#111">210</div>
<div class="t" style="left:1148.1px;width:200px;text-align:center;top:789.5999999999999px;font-size:10px;color:#111">220</div>
<div class="" style="left:2px;top:800.5px;width:1295px;height:23px;background:#727272"></div>
<div class="" style="left:9.4px;top:805.4px;width:24.4px;height:15.9px;background:linear-gradient(#4a4a4a,#363636);border:1px solid #1a1a1a;border-radius:4px"></div>
<svg style="position:absolute;left:12px;top:807px" width="12" height="12"><circle cx="6" cy="6" r="5.3" fill="#f2f2f2" stroke="#222" stroke-width="0.8"/><path d="M6 6 L3 8.5 M6 6 L8 2" stroke="#d03030" stroke-width="1.1"/></svg>
<svg style="position:absolute;left:26px;top:807.5px" width="6" height="12"><path d="M0.5 5 L3 1 L5.5 5Z M0.5 7 L3 11 L5.5 7Z" fill="#bbb"/></svg>
<div class="t" style="left:44px;top:809.8px;">View</div>
<div class="t" style="left:82px;top:809.8px;">Marker</div>
<div class="t" style="left:127.5px;top:809.8px;">Frame</div>
<div class="t" style="left:171px;top:809.8px;">Playback</div>
<div class="" style="left:219.4px;top:806px;width:33px;height:15.5px;background:linear-gradient(#a4a4a4,#8e8e8e);border:1px solid #2a2a2a;border-radius:4px"></div>
<div class="" style="left:235.8px;top:806.5px;width:1px;height:14.5px;background:#333"></div>
<svg style="position:absolute;left:222px;top:808px" width="28" height="12"><circle cx="6" cy="6" r="5" fill="#eee" stroke="#222" stroke-width="0.8"/><path d="M6 6 V1 A5 5 0 0 1 11 6Z" fill="#f0a030"/><path d="M19 5 V3.5 a3 3 0 0 1 6 0 V5" stroke="#222" stroke-width="1" fill="none"/><rect x="18" y="5" width="8" height="6" fill="#ddd" stroke="#222" stroke-width="0.7"/></svg>
<div class="num" style="left:257.8px;top:806px;width:188.7px;height:15.5px;border-radius:7px"></div>
<svg style="position:absolute;left:262.8px;top:809.75px" width="5" height="8"><path d="M4 0.5 L0.8 4 L4 7.5Z" fill="#6d6d6d"/></svg>
<svg style="position:absolute;left:436.5px;top:809.75px" width="5" height="8"><path d="M1 0.5 L4.2 4 L1 7.5Z" fill="#6d6d6d"/></svg>
<div class="t" style="right:1166.5px;top:809.25px;"></div>
<div class="" style="left:354.5px;top:806.5px;width:1px;height:14.5px;background:#333"></div>
<div class="t" style="left:268px;top:809.8px;">Start:</div>
<div class="t" style="right:1259px;top:809.8px;">1</div>
<div class="t" style="left:368px;top:809.8px;">End:</div>
<div class="t" style="right:1167px;top:809.8px;">250</div>
<svg style="position:absolute;left:347px;top:810px" width="5" height="8"><path d="M1 0.5 L4.2 4 L1 7.5Z" fill="#6d6d6d"/></svg>
<svg style="position:absolute;left:360px;top:810px" width="5" height="8"><path d="M4 0.5 L0.8 4 L4 7.5Z" fill="#6d6d6d"/></svg>
<div class="num" style="left:451.6px;top:806px;width:74.5px;height:15.5px;border-radius:7px"></div>
<svg style="position:absolute;left:456.6px;top:809.75px" width="5" height="8"><path d="M4 0.5 L0.8 4 L4 7.5Z" fill="#6d6d6d"/></svg>
<svg style="position:absolute;left:516.1px;top:809.75px" width="5" height="8"><path d="M1 0.5 L4.2 4 L1 7.5Z" fill="#6d6d6d"/></svg>
<div class="t" style="right:1086.9px;top:809.25px;">0</div>
<div class="" style="left:540.6px;top:806px;width:101px;height:15.5px;background:linear-gradient(#a4a4a4,#8e8e8e);border:1px solid #2a2a2a;border-radius:4px"></div>
<div class="" style="left:557.4px;top:806.5px;width:1px;height:14.5px;background:#333"></div>
<div class="" style="left:574.2px;top:806.5px;width:1px;height:14.5px;background:#333"></div>
<div class="" style="left:591.0px;top:806.5px;width:1px;height:14.5px;background:#333"></div>
<div class="" style="left:607.8000000000001px;top:806.5px;width:1px;height:14.5px;background:#333"></div>
<div class="" style="left:624.6px;top:806.5px;width:1px;height:14.5px;background:#333"></div>
<svg style="position:absolute;left:543px;top:808px" width="98" height="12"><path d="M2 1.5 V10.5 M3 6 L8 1.5 V10.5Z M7 6 L12 1.5 V10.5Z" stroke="#111" stroke-width="0.9" fill="#eee"/><path d="M19 6 L24 1.5 V10.5Z M24 6 L29 1.5 V10.5Z" stroke="#111" stroke-width="0.9" fill="#eee"/><path d="M42 1.5 V10.5 L36 6Z" stroke="#111" stroke-width="0.9" fill="#eee"/><path d="M53 1.5 V10.5 L59 6Z" stroke="#111" stroke-width="0.9" fill="#eee"/><path d="M69 1.5 L74 6 L69 10.5Z M74 1.5 L79 6 L74 10.5Z" stroke="#111" stroke-width="0.9" fill="#eee"/><path d="M86 1.5 L91 6 L86 10.5Z M90 1.5 L95 6 L90 10.5Z M96 1.5 V10.5" stroke="#111" stroke-width="0.9" fill="#eee"/></svg>
<div class="dd" style="left:644.7px;top:806px;width:95px;height:15.5px;"></div>
<div class="t w" style="left:650.7px;top:809.55px;">No Sync</div>
<svg style="position:absolute;left:729.7px;top:807.75px" width="6" height="12"><path d="M0.5 5 L3 1 L5.5 5Z M0.5 7 L3 11 L5.5 7Z" fill="#ddd"/></svg>
<div class="" style="left:754.4px;top:806px;width:15px;height:15.5px;background:linear-gradient(#a4a4a4,#8e8e8e);border:1px solid #2a2a2a;border-radius:4px"></div>
<div class="" style="left:758px;top:809.5px;width:8px;height:8px;border-radius:50%;background:#e84020"></div>
<div class="" style="left:775px;top:806px;width:108px;height:15.5px;background:linear-gradient(#a6a6a6,#b6b6b6);border:1px solid #333;border-radius:4px 0 0 4px"></div>
<svg style="position:absolute;left:778px;top:807px" width="14" height="13"><circle cx="4" cy="3.5" r="2.3" fill="none" stroke="#222" stroke-width="1.6"/><path d="M4 6 V11.5 L7 10 M4 9 L7 7.5 M7 10 L11 6" stroke="#222" stroke-width="1.6" fill="none"/><circle cx="4" cy="3.5" r="2.3" fill="none" stroke="#e8d870" stroke-width="0.8"/><path d="M4 6 V11.5 L7 10 M7 10 L11 6" stroke="#e8d870" stroke-width="0.8" fill="none"/></svg>
<div class="" style="left:883.4px;top:806px;width:17px;height:15.5px;background:linear-gradient(#a4a4a4,#8e8e8e);border:1px solid #2a2a2a;border-radius:0"></div>
<div class="" style="left:900.3px;top:806px;width:16px;height:15.5px;background:linear-gradient(#a4a4a4,#8e8e8e);border:1px solid #2a2a2a;border-radius:0 4px 4px 0"></div>
<svg style="position:absolute;left:885px;top:808px" width="30" height="12"><circle cx="3.5" cy="8.5" r="2.3" fill="none" stroke="#eee" stroke-width="1.2"/><path d="M5 7 L11 1.5" stroke="#eee" stroke-width="1.4"/><circle cx="20" cy="8.5" r="2.3" fill="none" stroke="#eee" stroke-width="1.2"/><path d="M21.5 7 L27 1.5" stroke="#eee" stroke-width="1.4"/><path d="M17 1.5 L28 10.5 M28 1.5 L17 10.5" stroke="#d04040" stroke-width="1.5"/></svg>
<div class="" style="left:0px;top:823.5px;width:1600px;height:2.5px;background:#e6e6e6"></div>
<svg style="position:absolute;left:2px;top:29.5px" width="12" height="12"><path d="M0 2 L10 12 M0 6 L6 12" stroke="#e0e0e0" stroke-width="1" opacity="0.8"/><path d="M0 3 L9 12 M0 7 L5 12" stroke="#222" stroke-width="0.7" opacity="0.6"/></svg>
<svg style="position:absolute;left:2px;top:748.5px" width="12" height="12"><path d="M0 2 L10 12 M0 6 L6 12" stroke="#e0e0e0" stroke-width="1" opacity="0.8"/><path d="M0 3 L9 12 M0 7 L5 12" stroke="#222" stroke-width="0.7" opacity="0.6"/></svg>
<svg style="position:absolute;left:1298px;top:429px" width="12" height="12"><path d="M0 2 L10 12 M0 6 L6 12" stroke="#e0e0e0" stroke-width="1" opacity="0.8"/><path d="M0 3 L9 12 M0 7 L5 12" stroke="#222" stroke-width="0.7" opacity="0.6"/></svg>
<svg style="position:absolute;left:1298px;top:811.5px" width="12" height="12"><path d="M0 2 L10 12 M0 6 L6 12" stroke="#e0e0e0" stroke-width="1" opacity="0.8"/><path d="M0 3 L9 12 M0 7 L5 12" stroke="#222" stroke-width="0.7" opacity="0.6"/></svg>
<svg style="position:absolute;left:1283px;top:42.5px" width="14" height="14"><path d="M2 0 L14 12 M6 0 L14 8" stroke="#e0e0e0" stroke-width="1" opacity="0.8"/><path d="M3 0 L14 11 M7 0 L14 7" stroke="#222" stroke-width="0.7" opacity="0.6"/></svg>
<svg style="position:absolute;left:1586px;top:42.5px" width="14" height="14"><path d="M2 0 L14 12 M6 0 L14 8" stroke="#e0e0e0" stroke-width="1" opacity="0.8"/><path d="M3 0 L14 11 M7 0 L14 7" stroke="#222" stroke-width="0.7" opacity="0.6"/></svg>
<svg style="position:absolute;left:1283px;top:761px" width="14" height="14"><path d="M2 0 L14 12 M6 0 L14 8" stroke="#e0e0e0" stroke-width="1" opacity="0.8"/><path d="M3 0 L14 11 M7 0 L14 7" stroke="#222" stroke-width="0.7" opacity="0.6"/></svg>
<svg style="position:absolute;left:1586px;top:443.5px" width="14" height="14"><path d="M2 0 L14 12 M6 0 L14 8" stroke="#e0e0e0" stroke-width="1" opacity="0.8"/><path d="M3 0 L14 11 M7 0 L14 7" stroke="#222" stroke-width="0.7" opacity="0.6"/></svg></body></html>
